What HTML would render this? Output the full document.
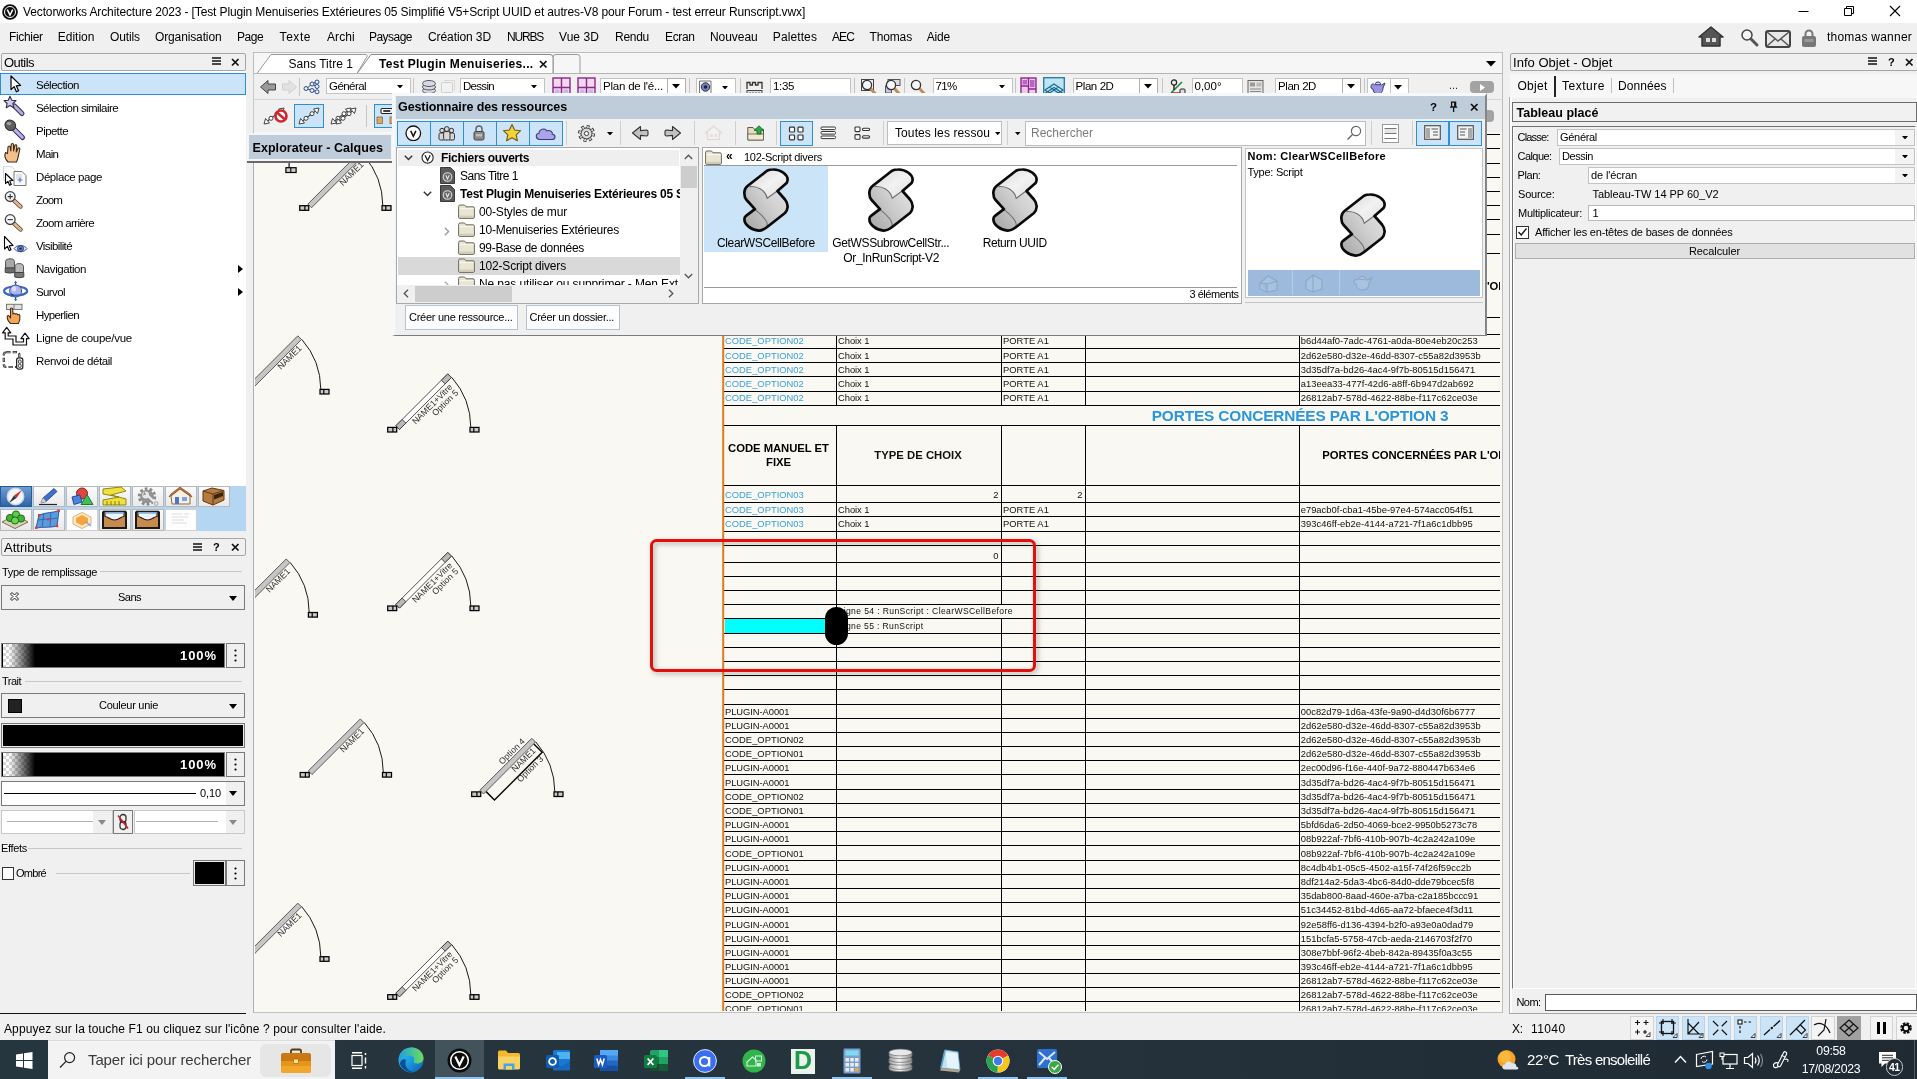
<!DOCTYPE html>
<html lang="fr"><head><meta charset="utf-8"><title>Vectorworks Architecture 2023</title>
<style>
html,body{margin:0;padding:0;background:#f0f0f0;}
body{width:1917px;height:1079px;overflow:hidden;font-family:"Liberation Sans",sans-serif;color:#000;}
#root{position:relative;width:1917px;height:1079px;overflow:hidden;background:#f0f0f0;will-change:transform;}
#root div,#root svg{position:absolute;box-sizing:border-box;}
#root .t{white-space:nowrap;}
#root span{white-space:nowrap;}

</style></head>
<body>
<div id="root">
<!-- p_frame -->
<div style="left:0px;top:0px;width:1917px;height:23px;background:#fff;"></div>
<svg style="left:2px;top:3.7px;" width="16" height="16" viewBox="0 0 16 16"><circle cx="8" cy="8" r="7.8" fill="#0c0c0c"/><circle cx="8" cy="8" r="5.5" fill="none" stroke="#fff" stroke-width="1"/><path d="M5.3 5.6 L8 11 L10.7 5.6" fill="none" stroke="#fff" stroke-width="1.5"/></svg>
<div class="t" style="left:23px;top:0px;height:24px;line-height:24px;font-size:12px;letter-spacing:-0.129px;">Vectorworks Architecture 2023 - [Test Plugin Menuiseries Extérieures 05 Simplifié V5+Script UUID et autres-V8 pour Forum - test erreur Runscript.vwx]</div>
<svg style="left:1790px;top:0px;" width="127" height="23" viewBox="0 0 127 23"><path d="M8.5 11.5h10" stroke="#000" stroke-width="1" fill="none"/><path d="M54.5 8.5h7v7h-7z M56.5 8.5v-2h7v7h-2" stroke="#000" stroke-width="1" fill="none"/><path d="M100 6l10 10M110 6l-10 10" stroke="#000" stroke-width="1.1" fill="none"/></svg>
<div style="left:0px;top:23px;width:1917px;height:29px;background:#f0f0f0;"></div>
<div class="t" style="left:9px;top:24px;height:26px;line-height:26px;font-size:12px;letter-spacing:-0.329px;">Fichier</div>
<div class="t" style="left:57.7px;top:24px;height:26px;line-height:26px;font-size:12px;letter-spacing:0.016px;">Edition</div>
<div class="t" style="left:110px;top:24px;height:26px;line-height:26px;font-size:12px;letter-spacing:-0.112px;">Outils</div>
<div class="t" style="left:155px;top:24px;height:26px;line-height:26px;font-size:12px;letter-spacing:-0.128px;">Organisation</div>
<div class="t" style="left:237px;top:24px;height:26px;line-height:26px;font-size:12px;letter-spacing:-0.431px;">Page</div>
<div class="t" style="left:279.6px;top:24px;height:26px;line-height:26px;font-size:12px;letter-spacing:0.544px;">Texte</div>
<div class="t" style="left:327px;top:24px;height:26px;line-height:26px;font-size:12px;letter-spacing:0.072px;">Archi</div>
<div class="t" style="left:369px;top:24px;height:26px;line-height:26px;font-size:12px;letter-spacing:-0.528px;">Paysage</div>
<div class="t" style="left:428px;top:24px;height:26px;line-height:26px;font-size:12px;letter-spacing:-0.093px;">Création 3D</div>
<div class="t" style="left:507px;top:24px;height:26px;line-height:26px;font-size:12px;letter-spacing:-1.202px;">NURBS</div>
<div class="t" style="left:559px;top:24px;height:26px;line-height:26px;font-size:12px;letter-spacing:0.070px;">Vue 3D</div>
<div class="t" style="left:615px;top:24px;height:26px;line-height:26px;font-size:12px;letter-spacing:-0.272px;">Rendu</div>
<div class="t" style="left:665px;top:24px;height:26px;line-height:26px;font-size:12px;letter-spacing:-0.329px;">Ecran</div>
<div class="t" style="left:710px;top:24px;height:26px;line-height:26px;font-size:12px;letter-spacing:-0.047px;">Nouveau</div>
<div class="t" style="left:772.8px;top:24px;height:26px;line-height:26px;font-size:12px;letter-spacing:0.105px;">Palettes</div>
<div class="t" style="left:832px;top:24px;height:26px;line-height:26px;font-size:12px;letter-spacing:-0.892px;">AEC</div>
<div class="t" style="left:869.5px;top:24px;height:26px;line-height:26px;font-size:12px;letter-spacing:-0.141px;">Thomas</div>
<div class="t" style="left:926.7px;top:24px;height:26px;line-height:26px;font-size:12px;letter-spacing:-0.179px;">Aide</div>
<svg style="left:1697px;top:25px;" width="28" height="24" viewBox="0 0 28 24"><path d="M2 12 L14 2 L26 12 L23 12 L23 21 L5 21 L5 12 Z" fill="#555" stroke="#333" stroke-width="1.5" stroke-linejoin="round"/><rect x="9" y="13" width="4" height="4" fill="#ddd"/><rect x="15" y="13" width="4" height="4" fill="#ddd"/></svg>
<svg style="left:1740px;top:28px;" width="20" height="20" viewBox="0 0 20 20"><circle cx="7" cy="7" r="5" fill="#f4f4f4" stroke="#444" stroke-width="1.5"/><path d="M11 11 L17 17" stroke="#555" stroke-width="3" stroke-linecap="round"/></svg>
<svg style="left:1765px;top:30px;" width="26" height="18" viewBox="0 0 26 18"><rect x="1" y="1" width="24" height="16" rx="2" fill="#e8e8e8" stroke="#444" stroke-width="2"/><path d="M2 2 L13 11 L24 2 M2 16 L10 9 M24 16 L16 9" fill="none" stroke="#555" stroke-width="1.5"/></svg>
<svg style="left:1801px;top:28px;" width="16" height="20" viewBox="0 0 16 20"><path d="M4.5 9 V6 a3.5 3.5 0 0 1 7 0 V9" fill="none" stroke="#777" stroke-width="2"/><rect x="1" y="8" width="14" height="11" rx="2" fill="#777"/><rect x="3.5" y="11" width="9" height="3" fill="#999"/></svg>
<div class="t" style="left:1827px;top:24px;height:26px;line-height:26px;font-size:12px;letter-spacing:0.228px;">thomas wanner</div>

<!-- p_left -->
<div style="left:1px;top:52.5px;width:245px;height:18px;background:#f0f0f0;border:1px solid #a5a5a5;border-radius:2px;"></div>
<div class="t" style="left:4px;top:52.8px;height:19px;line-height:19px;font-size:13px;letter-spacing:-0.538px;">Outils</div>
<svg style="left:212px;top:57px;" width="10" height="9" viewBox="0 0 10 9"><path d="M0 1h9M0 4h9M0 7h9" stroke="#111" stroke-width="1.4"/></svg>
<svg style="left:231px;top:57.5px;" width="9" height="9" viewBox="0 0 9 9"><path d="M1 1l6.5 6.5M7.5 1L1 7.5" stroke="#111" stroke-width="1.7"/></svg>
<div style="left:0px;top:71px;width:246px;height:415px;background:#fff;"></div>
<div style="left:0px;top:73px;width:245.5px;height:21.5px;background:#cce4f7;border:1px solid #2f8fd6;"></div>
<svg style="left:0px;top:72.3px;" width="30" height="24" viewBox="0 0 30 24"><path d="M11 4 V17.6 L14.1 14.6 L16.4 19.8 L18.6 18.8 L16.3 13.8 L20.6 13.4 Z" fill="#fff" stroke="#000" stroke-width="1.2" stroke-linejoin="round"/></svg>
<div class="t" style="left:36px;top:75.0px;height:20px;line-height:20px;font-size:11.5px;letter-spacing:-0.478px;">Sélection</div>
<svg style="left:0px;top:95.3px;" width="30" height="24" viewBox="0 0 30 24"><path d="M14.5 11 L22 18.5" stroke="#3a3a4a" stroke-width="5" stroke-linecap="round"/><path d="M14.5 11 L22 18.5" stroke="#b4aeea" stroke-width="2.8" stroke-linecap="round"/><path d="M10 1.2 L11.8 5.2 L16 5.6 L12.9 8.5 L13.8 12.8 L10 10.6 L6.2 12.8 L7.1 8.5 L4 5.6 L8.2 5.2 Z" fill="#cfc8fa" stroke="#2e2e3e" stroke-width="1.1" stroke-linejoin="round"/></svg>
<div class="t" style="left:36px;top:98.0px;height:20px;line-height:20px;font-size:11.5px;letter-spacing:-0.562px;">Sélection similaire</div>
<svg style="left:0px;top:118.3px;" width="30" height="24" viewBox="0 0 30 24"><path d="M12.5 9.5 L22.5 19.5" stroke="#3a3a55" stroke-width="5.2" stroke-linecap="round"/><path d="M12.5 9.5 L22.3 19.3" stroke="#b9b2f0" stroke-width="3" stroke-linecap="round"/><ellipse cx="10.3" cy="7.3" rx="5.6" ry="5" transform="rotate(40 10.3 7.3)" fill="#5e5e5e" stroke="#2e2e2e" stroke-width="1"/><ellipse cx="9" cy="5.6" rx="2.4" ry="1.6" fill="#a0a0a0"/></svg>
<div class="t" style="left:36px;top:121.0px;height:20px;line-height:20px;font-size:11.5px;letter-spacing:-0.543px;">Pipette</div>
<svg style="left:0px;top:141.3px;" width="30" height="24" viewBox="0 0 30 24"><path d="M8 21 C5 18 4 15 5.5 11.5 L7.5 12.5 L8 6 C8.2 4.6 10 4.6 10.2 6 L10.8 10 L11.2 3.6 C11.4 2.2 13.4 2.2 13.5 3.6 L13.6 10 L14.8 4.6 C15.2 3.2 17 3.6 16.8 5 L16.2 11 L18 7.4 C18.7 6.2 20.3 7 19.8 8.3 C18.6 12 18.5 17.5 16.5 21 Z" fill="#f3c08c" stroke="#3a2a1a" stroke-width="1.1" stroke-linejoin="round"/></svg>
<div class="t" style="left:36px;top:144.0px;height:20px;line-height:20px;font-size:11.5px;letter-spacing:-0.656px;">Main</div>
<svg style="left:0px;top:164.3px;" width="30" height="24" viewBox="0 0 30 24"><path d="M3.5 2.5 h8 l4 4 V16 H3.5 Z" fill="#fafafa" stroke="#d8d8d8" stroke-width="1"/><path d="M14 7.5 h8 l4 4 V21.5 H14 Z" fill="#fafafa" stroke="#777" stroke-width="1"/><rect x="16" y="10" width="6" height="5" fill="#e4e4e4"/><path d="M20 13.5v5M17.5 16h5" stroke="#4a6cc9" stroke-width="1"/><path d="M5.5 9.5 V19.6 L7.9 17.4 L9.6 21.2 L11.3 20.4 L9.6 16.8 L12.8 16.5 Z" fill="#fff" stroke="#000" stroke-width="1.1" stroke-linejoin="round"/></svg>
<div class="t" style="left:36px;top:167.0px;height:20px;line-height:20px;font-size:11.5px;letter-spacing:-0.414px;">Déplace page</div>
<svg style="left:0px;top:187.3px;" width="30" height="24" viewBox="0 0 30 24"><path d="M14.5 14 L20.5 19.5" stroke="#5a4632" stroke-width="4.4" stroke-linecap="round"/><path d="M14.5 14 L20.5 19.5" stroke="#e2b78c" stroke-width="2.6" stroke-linecap="round"/><circle cx="10.2" cy="9.6" r="4.9" fill="#f4f7fb" stroke="#444" stroke-width="1.3"/><path d="M7.6 9.6h5.2M10.2 7v5.2" stroke="#333" stroke-width="1.1"/></svg>
<div class="t" style="left:36px;top:190.0px;height:20px;line-height:20px;font-size:11.5px;letter-spacing:-0.848px;">Zoom</div>
<svg style="left:0px;top:210.3px;" width="30" height="24" viewBox="0 0 30 24"><path d="M14.5 14 L20.5 19.5" stroke="#5a4632" stroke-width="4.4" stroke-linecap="round"/><path d="M14.5 14 L20.5 19.5" stroke="#e2b78c" stroke-width="2.6" stroke-linecap="round"/><circle cx="10.2" cy="9.6" r="4.9" fill="#f4f7fb" stroke="#444" stroke-width="1.3"/><path d="M7.6 9.6h5.2" stroke="#333" stroke-width="1.1"/></svg>
<div class="t" style="left:36px;top:213.0px;height:20px;line-height:20px;font-size:11.5px;letter-spacing:-0.651px;">Zoom arrière</div>
<svg style="left:0px;top:233.3px;" width="30" height="24" viewBox="0 0 30 24"><path d="M4.5 3.5 V16 L7.4 13.3 L9.2 17.6 L11 16.8 L9.2 12.7 L13 12.4 Z" fill="#fff" stroke="#000" stroke-width="1.1" stroke-linejoin="round"/><path d="M14 15.6 C17 11.4 24 11.4 27 15.6 C24 19.8 17 19.8 14 15.6 Z" fill="#dfe8fa" stroke="#4a5a8a" stroke-width="1"/><circle cx="20.5" cy="15.6" r="3" fill="#6a86d6" stroke="#2a3a6a"/><circle cx="20.5" cy="15.6" r="1.2" fill="#1a2244"/></svg>
<div class="t" style="left:36px;top:236.0px;height:20px;line-height:20px;font-size:11.5px;letter-spacing:-0.597px;">Visibilité</div>
<svg style="left:0px;top:256.3px;" width="30" height="24" viewBox="0 0 30 24"><path d="M5.5 5.5 C5.5 1.8 14.5 1.8 14.5 5.5 V12 H5.5 Z" fill="#a8a8a8" stroke="#555" stroke-width="1"/><path d="M5.2 12 H14.8 V16.4 Q10 17.8 5.2 16.4 Z" fill="#6c6c6c" stroke="#444" stroke-width="1"/><path d="M15 10.3 C15 6.6 23.5 6.6 23.5 10.3 V16.5 H15 Z" fill="#b8b8b8" stroke="#555" stroke-width="1"/><path d="M14.7 16.5 H23.8 V21 Q19.2 22.4 14.7 21 Z" fill="#787878" stroke="#444" stroke-width="1"/></svg>
<div class="t" style="left:36px;top:259.0px;height:20px;line-height:20px;font-size:11.5px;letter-spacing:-0.434px;">Navigation</div>
<svg style="left:0px;top:279.3px;" width="30" height="24" viewBox="0 0 30 24"><path d="M15.6 3 V21" stroke="#2c4f94" stroke-width="1.2"/><path d="M14 4 L15.6 1.5 L17.2 4 Z M14 20 L15.6 22.5 L17.2 20 Z" fill="#3b6fc4"/><ellipse cx="15.6" cy="12" rx="11.6" ry="4.6" fill="none" stroke="#3a66c4" stroke-width="2"/><circle cx="15.6" cy="12" r="6" fill="#aeb4f2" stroke="#3a4f9a" stroke-width="1"/><circle cx="14" cy="10" r="2.4" fill="#d9dcfb"/><path d="M4.2 13.2 C8 17.6 23 17.6 27 13.2" fill="none" stroke="#3a66c4" stroke-width="2"/><path d="M11 14.5 l2.5 1.8 l-2.8 1.2" fill="none" stroke="#1f3f8a" stroke-width="1"/></svg>
<div class="t" style="left:36px;top:282.0px;height:20px;line-height:20px;font-size:11.5px;letter-spacing:-0.599px;">Survol</div>
<svg style="left:0px;top:302.3px;" width="30" height="24" viewBox="0 0 30 24"><rect x="6.5" y="2.3" width="15.5" height="5.2" fill="#e2e2e2" stroke="#777"/><path d="M14 2.3v5.2" stroke="#777"/><path d="M10.5 21.5 C8 19 7 17 7.2 14.5 C7.3 13.4 8.6 13.2 9.2 14.2 L10.6 16 L10.4 7.2 C10.4 5.6 12.6 5.6 12.7 7.2 L12.9 12 C13.3 11 15 11 15.2 12.3 C15.8 11.4 17.4 11.6 17.6 12.9 C18.3 12.2 19.8 12.5 19.9 13.8 C20.2 16.5 19.8 19 18.4 21.5 Z" fill="#f2a75a" stroke="#4a2a10" stroke-width="1.1" stroke-linejoin="round"/></svg>
<div class="t" style="left:36px;top:305.0px;height:20px;line-height:20px;font-size:11.5px;letter-spacing:-0.619px;">Hyperlien</div>
<svg style="left:0px;top:325.3px;" width="30" height="24" viewBox="0 0 30 24"><path d="M6.7 6 V12.5 H14.5 V18.5 H25 V12" fill="none" stroke="#111" stroke-width="4.2" stroke-linejoin="miter"/><path d="M2.6 7.8 L6.7 2.4 L10.8 7.8 Z M20.9 13.6 L25 8.2 L29.1 13.6 Z" fill="#fff" stroke="#111" stroke-width="1.2" stroke-linejoin="round"/><path d="M6.7 6.5 V12.5 H14.5 V18.5 H25 V12.5" fill="none" stroke="#fff" stroke-width="1.8"/></svg>
<div class="t" style="left:36px;top:328.0px;height:20px;line-height:20px;font-size:11.5px;letter-spacing:-0.243px;">Ligne de coupe/vue</div>
<svg style="left:0px;top:348.3px;" width="30" height="24" viewBox="0 0 30 24"><rect x="3.8" y="4.2" width="15.5" height="14.8" rx="2.5" fill="none" stroke="#222" stroke-width="2.2" stroke-dasharray="4.2 2.2"/><rect x="3.8" y="4.2" width="15.5" height="14.8" rx="2.5" fill="none" stroke="#fff" stroke-width=".7" stroke-dasharray="3 3.4" stroke-dashoffset="-.6"/><rect x="16.6" y="9.8" width="6.2" height="11.4" rx="2.2" fill="#fff" stroke="#222" stroke-width="1.2"/><rect x="18.3" y="12" width="2.8" height="3.2" rx="1" fill="none" stroke="#222" stroke-width=".9"/><rect x="18.3" y="16.2" width="2.8" height="3.2" rx="1" fill="none" stroke="#222" stroke-width=".9"/></svg>
<div class="t" style="left:36px;top:351.0px;height:20px;line-height:20px;font-size:11.5px;letter-spacing:-0.404px;">Renvoi de détail</div>
<svg style="left:238px;top:264.5px;" width="5" height="8" viewBox="0 0 5 8"><path d="M0 0L5 4L0 8z"/></svg>
<svg style="left:238px;top:287.5px;" width="5" height="8" viewBox="0 0 5 8"><path d="M0 0L5 4L0 8z"/></svg>
<div style="left:0px;top:485.8px;width:246px;height:45.4px;background:#b4d6f3;"></div>
<div style="left:0px;top:486.0px;width:31.5px;height:21.4px;background:linear-gradient(#6d9ed6,#2f64a6);border:1px solid #2a5a96;"></div>
<svg style="left:0px;top:486.0px;" width="31" height="21" viewBox="0 0 31 21"><circle cx="15.5" cy="10.5" r="8.2" fill="#f4f7fb" stroke="#d0d8e4" stroke-width="1.5"/><path d="M22 4 L14 9.5 L16.5 12 Z" fill="#d2302c"/><path d="M9 17 L14 9.5 L16.5 12 Z" fill="#333"/></svg>
<div style="left:33px;top:486.0px;width:31.5px;height:21.4px;background:linear-gradient(#fbfbfb,#e9e9e9);border:1px solid #b8b8b8;"></div>
<svg style="left:33px;top:486.0px;" width="31" height="21" viewBox="0 0 31 21"><path d="M8 17 L10 12 L21 2.5 L24 5.5 L13 15.5 Z" fill="#3d6fd1" stroke="#1f3f8a" stroke-width=".8"/><path d="M8 17 L10 12 L13 15.5 Z" fill="#f1d2a8"/><path d="M6 18.5 H24" stroke="#223" stroke-width="1.2"/></svg>
<div style="left:66px;top:486.0px;width:31.5px;height:21.4px;background:linear-gradient(#fbfbfb,#e9e9e9);border:1px solid #b8b8b8;"></div>
<svg style="left:66px;top:486.0px;" width="31" height="21" viewBox="0 0 31 21"><circle cx="16" cy="7.5" r="5.5" fill="#e0453e" stroke="#8c1f1b"/><path d="M6 11 L14 9 L16 16 L8 18.5 Z" fill="#4a86e0" stroke="#1f4a9a"/><path d="M21 8.5 L27 18.5 H15 Z" fill="#3fbf5a" stroke="#1f7a33"/></svg>
<div style="left:99px;top:486.0px;width:31.5px;height:21.4px;background:linear-gradient(#fbfbfb,#e9e9e9);border:1px solid #b8b8b8;"></div>
<svg style="left:99px;top:486.0px;" width="31" height="21" viewBox="0 0 31 21"><path d="M4 3 L22 1 L27 5 L12 9 L27 13 L27 19 L4 19 L4 14 L20 11 L4 8 Z" fill="#efe23a" stroke="#8f8516" stroke-width="1"/><path d="M8 15v4M12 15v4M16 15v4M20 15v4" stroke="#6b6410" stroke-width=".8"/></svg>
<div style="left:132px;top:486.0px;width:31.5px;height:21.4px;background:linear-gradient(#fbfbfb,#e9e9e9);border:1px solid #b8b8b8;"></div>
<svg style="left:132px;top:486.0px;" width="31" height="21" viewBox="0 0 31 21"><circle cx="15" cy="10.5" r="7.6" fill="none" stroke="#8a8a8a" stroke-width="3.2" stroke-dasharray="2.7 2.07"/><circle cx="15" cy="10.5" r="6.8" fill="#939393"/><circle cx="13.6" cy="9" r="3.4" fill="#e9e9e9"/><path d="M12.2 5.4 L14.2 8.6 L11 9.6 Z" fill="#939393"/><path d="M15 10.6 L22.4 17.8 L24 16.2 L16.8 9 Z" fill="#e9e9e9"/><circle cx="24.2" cy="17.6" r="1.8" fill="none" stroke="#b0b0b0" stroke-width="1.2"/></svg>
<div style="left:165px;top:486.0px;width:31.5px;height:21.4px;background:linear-gradient(#fbfbfb,#e9e9e9);border:1px solid #b8b8b8;"></div>
<svg style="left:165px;top:486.0px;" width="31" height="21" viewBox="0 0 31 21"><path d="M6 10 L15 3 L25 10 L25 18 L7 18 Z" fill="#f7efe2" stroke="#8a6a45" stroke-width="1"/><path d="M4 11 L15 2.5 L27 11 L25 8 L15 1 L6 8 Z" fill="#d98a4a" stroke="#8a4a1c" stroke-width=".8"/><rect x="10" y="11" width="4" height="7" fill="#4a76c4"/><rect x="17" y="11" width="5" height="4" fill="#7aa5e6"/></svg>
<div style="left:198px;top:486.0px;width:31.5px;height:21.4px;background:linear-gradient(#fbfbfb,#e9e9e9);border:1px solid #b8b8b8;"></div>
<svg style="left:198px;top:486.0px;" width="31" height="21" viewBox="0 0 31 21"><path d="M5 5 L14 2 L26 4.5 L26 14 L15 19 L5 15 Z" fill="#b77a3e" stroke="#5e3a17" stroke-width="1"/><path d="M5 5 L15 8 L26 4.5 M15 8 V19" stroke="#5e3a17" fill="none"/><path d="M16 9 L25 6 V10 L16 13.5 Z" fill="#3a2410"/></svg>
<div style="left:0px;top:509.2px;width:31.5px;height:21.4px;background:linear-gradient(#fbfbfb,#e9e9e9);border:1px solid #b8b8b8;"></div>
<svg style="left:0px;top:509.2px;" width="31" height="21" viewBox="0 0 31 21"><path d="M2 13 L15 6 L28 13 L15 19.5 Z" fill="#d8d2b8" stroke="#77724f"/><circle cx="10" cy="9" r="3.6" fill="#45b336" stroke="#1f6a17"/><circle cx="16" cy="5.5" r="3.6" fill="#5fca4a" stroke="#1f6a17"/><circle cx="21" cy="9.5" r="3.6" fill="#45b336" stroke="#1f6a17"/><circle cx="15" cy="11.5" r="3.6" fill="#6ad656" stroke="#1f6a17"/></svg>
<div style="left:33px;top:509.2px;width:31.5px;height:21.4px;background:linear-gradient(#fbfbfb,#e9e9e9);border:1px solid #b8b8b8;"></div>
<svg style="left:33px;top:509.2px;" width="31" height="21" viewBox="0 0 31 21"><path d="M6 6 C14 3 20 4 26 1.5 L24 17 C17 19 11 17.5 3 19 Z" fill="#5a9ae0" stroke="#2a5aa0"/><path d="M11 4.5 L9 18 M18 3.6 L17 18 M5 11 C12 10 19 10 25 9" stroke="#2a5aa0" fill="none" stroke-width=".8"/><g fill="#e03a2e"><rect x="5" y="5" width="2.4" height="2.4"/><rect x="24.5" y=".5" width="2.4" height="2.4"/><rect x="2" y="17.6" width="2.4" height="2.4"/><rect x="22.8" y="15.8" width="2.4" height="2.4"/><rect x="14" y="9" width="2.4" height="2.4"/></g></svg>
<div style="left:66px;top:509.2px;width:31.5px;height:21.4px;background:#fff;border:1px solid #d0d0d0;"></div>
<svg style="left:66px;top:509.2px;" width="31" height="21" viewBox="0 0 31 21"><path d="M7 8 L16 3.5 L25 8 V15 L16 19.5 L7 15 Z" fill="#fbe9cf" stroke="#e0b070"/><path d="M10 9 L16 6 L22 9 V13.5 L16 16.5 L10 13.5 Z" fill="#f5a63a"/><path d="M20 13 l5 4" stroke="#7aa5e6" stroke-width="1.5"/></svg>
<div style="left:99px;top:509.2px;width:31.5px;height:21.4px;background:linear-gradient(#fbfbfb,#e9e9e9);border:1px solid #b8b8b8;"></div>
<svg style="left:99px;top:509.2px;" width="31" height="21" viewBox="0 0 31 21"><path d="M4 2.5 V19 H27 V2.5" fill="#c98a4e" stroke="#1a1a1a" stroke-width="2"/><path d="M6 2.5 H25 V7.5 C22 7.5 20 11 15.5 11 C11 11 9 7.5 6 7.5 Z" fill="#eef3f8" stroke="#1a1a1a" stroke-width="1.1"/><path d="M4 2.5 H27" stroke="#1a1a1a" stroke-width="1.6"/><path d="M6 4 H25" stroke="#7aa8d8" stroke-width="1.4"/></svg>
<div style="left:132px;top:509.2px;width:31.5px;height:21.4px;background:linear-gradient(#fbfbfb,#e9e9e9);border:1px solid #b8b8b8;"></div>
<svg style="left:132px;top:509.2px;" width="31" height="21" viewBox="0 0 31 21"><path d="M4 2.5 V19 H27 V2.5" fill="#c98a4e" stroke="#1a1a1a" stroke-width="2"/><path d="M6 2.5 H25 V7.5 C22 7.5 20 11 15.5 11 C11 11 9 7.5 6 7.5 Z" fill="#eef3f8" stroke="#1a1a1a" stroke-width="1.1"/><path d="M4 2.5 H27" stroke="#1a1a1a" stroke-width="1.6"/><path d="M6 4 H25" stroke="#7aa8d8" stroke-width="1.4"/></svg>
<div style="left:165px;top:509.2px;width:31.5px;height:21.4px;background:#fff;border:1px solid #d0d0d0;"></div>
<svg style="left:165px;top:509.2px;" width="31" height="21" viewBox="0 0 31 21"><rect x="5" y="2" width="21" height="17" fill="#fdfdfd"/><path d="M7 5h10M7 8h16M7 11h12M7 14h15M19 5h5" stroke="#d4d4d4" stroke-width=".8"/></svg>
<div style="left:1px;top:537.5px;width:245px;height:18.5px;background:#f0f0f0;border:1px solid #a5a5a5;border-radius:2px;"></div>
<div class="t" style="left:4px;top:537.6px;height:19px;line-height:19px;font-size:13px;letter-spacing:0.035px;">Attributs</div>
<svg style="left:193px;top:542.5px;" width="10" height="9" viewBox="0 0 10 9"><path d="M0 1h9M0 4h9M0 7h9" stroke="#111" stroke-width="1.4"/></svg>
<div class="t" style="left:213px;top:541px;height:12px;line-height:12px;font-size:11px;font-weight:bold;">?</div>
<svg style="left:231px;top:543px;" width="9" height="9" viewBox="0 0 9 9"><path d="M1 1l6.5 6.5M7.5 1L1 7.5" stroke="#111" stroke-width="1.7"/></svg>
<div class="t" style="left:2px;top:562px;height:20px;line-height:20px;font-size:11px;letter-spacing:-0.342px;">Type de remplissage</div>
<div style="left:100px;top:571px;width:142px;height:1px;background:#c8c8c8;"></div>
<div style="left:1px;top:584.5px;width:243.7px;height:25.5px;background:#f0f0f0;border:1px solid #7a7a7a;"></div>
<svg style="left:9px;top:591px;" width="11" height="11" viewBox="0 0 11 11"><path d="M1.5 3 L3 1.5 L5.5 4 L8 1.5 L9.5 3 L7 5.5 L9.5 8 L8 9.5 L5.5 7 L3 9.5 L1.5 8 L4 5.5 Z" fill="#fff" stroke="#222" stroke-width="1"/></svg>
<div class="t" style="left:118px;top:587px;height:21px;line-height:21px;font-size:11px;letter-spacing:-0.518px;">Sans</div>
<svg style="left:229px;top:596px;" width="8" height="5" viewBox="0 0 8 5"><path d="M0 0h8L4.0 5z" fill="#000"/></svg>
<div style="left:1px;top:642.5px;width:223.5px;height:25px;border:1px solid #7a7a7a;background:#000;"></div>
<div style="left:2.5px;top:643.5px;width:32px;height:23px;background-color:#fff;background-image:linear-gradient(45deg,#d4d4d4 25%,transparent 25%,transparent 75%,#d4d4d4 75%),linear-gradient(45deg,#d4d4d4 25%,transparent 25%,transparent 75%,#d4d4d4 75%);background-size:6px 6px;background-position:0 0,3px 3px;"></div>
<div style="left:2.5px;top:643.5px;width:32px;height:23px;background:linear-gradient(90deg,rgba(0,0,0,0) 20%,#000 100%);"></div>
<div class="t" style="left:180px;top:644.5px;height:22px;line-height:22px;font-size:13px;letter-spacing:0.938px;font-weight:bold;color:#fff;">100%</div>
<div style="left:225.5px;top:642.5px;width:19px;height:25px;background:#f0f0f0;border:1px solid #7a7a7a;"></div>
<svg style="left:233.5px;top:648.5px;" width="3" height="13" viewBox="0 0 3 13"><circle cx="1.5" cy="1.5" r="1.1"/><circle cx="1.5" cy="6.5" r="1.1"/><circle cx="1.5" cy="11.5" r="1.1"/></svg>
<div class="t" style="left:2px;top:671px;height:20px;line-height:20px;font-size:11px;letter-spacing:-0.518px;">Trait</div>
<div style="left:25px;top:680.5px;width:217px;height:1px;background:#c8c8c8;"></div>
<div style="left:1px;top:693px;width:243.7px;height:25px;background:#f0f0f0;border:1px solid #7a7a7a;"></div>
<div style="left:8px;top:699px;width:14px;height:14px;background:#222;border:1px solid #000;"></div>
<div class="t" style="left:99px;top:695px;height:21px;line-height:21px;font-size:11px;letter-spacing:-0.281px;">Couleur unie</div>
<svg style="left:229px;top:704px;" width="8" height="5" viewBox="0 0 8 5"><path d="M0 0h8L4.0 5z" fill="#000"/></svg>
<div style="left:1px;top:723px;width:243.7px;height:24.5px;background:#ececec;border:1px solid #7a7a7a;"></div>
<div style="left:3px;top:725px;width:239.7px;height:20.5px;background:#000;"></div>
<div style="left:1px;top:751.5px;width:223.5px;height:25px;border:1px solid #7a7a7a;background:#000;"></div>
<div style="left:2.5px;top:752.5px;width:32px;height:23px;background-color:#fff;background-image:linear-gradient(45deg,#d4d4d4 25%,transparent 25%,transparent 75%,#d4d4d4 75%),linear-gradient(45deg,#d4d4d4 25%,transparent 25%,transparent 75%,#d4d4d4 75%);background-size:6px 6px;background-position:0 0,3px 3px;"></div>
<div style="left:2.5px;top:752.5px;width:32px;height:23px;background:linear-gradient(90deg,rgba(0,0,0,0) 20%,#000 100%);"></div>
<div class="t" style="left:180px;top:753.5px;height:22px;line-height:22px;font-size:13px;letter-spacing:0.938px;font-weight:bold;color:#fff;">100%</div>
<div style="left:225.5px;top:751.5px;width:19px;height:25px;background:#f0f0f0;border:1px solid #7a7a7a;"></div>
<svg style="left:233.5px;top:757.5px;" width="3" height="13" viewBox="0 0 3 13"><circle cx="1.5" cy="1.5" r="1.1"/><circle cx="1.5" cy="6.5" r="1.1"/><circle cx="1.5" cy="11.5" r="1.1"/></svg>
<div style="left:1px;top:781px;width:243.7px;height:24.5px;background:#fff;border:1px solid #7a7a7a;"></div>
<div style="left:4px;top:792.5px;width:192px;height:1px;background:#000;"></div>
<div class="t" style="left:200px;top:783px;height:21px;line-height:21px;font-size:11px;letter-spacing:-0.102px;">0,10</div>
<div style="left:226px;top:782px;width:18px;height:22.5px;background:#f0f0f0;"></div>
<svg style="left:229px;top:791px;" width="8" height="5" viewBox="0 0 8 5"><path d="M0 0h8L4.0 5z" fill="#000"/></svg>
<div style="left:1px;top:809.5px;width:111.5px;height:24.5px;background:#fff;border:1px solid #c8c8c8;"></div>
<div style="left:7px;top:821px;width:86px;height:1px;background:#b0b0b0;"></div>
<div style="left:93px;top:810.5px;width:18.5px;height:22.5px;background:#f0f0f0;"></div>
<svg style="left:97.5px;top:820px;" width="8" height="5" viewBox="0 0 8 5"><path d="M0 0h8L4.0 5z" fill="#8a8a8a"/></svg>
<div style="left:112.5px;top:809.5px;width:20.5px;height:24.5px;background:#f0f0f0;border:1px solid #7a7a7a;"></div>
<svg style="left:116px;top:812px;" width="14" height="20" viewBox="0 0 14 20"><rect x="4" y="2.5" width="6" height="8" rx="3" fill="none" stroke="#333" stroke-width="1.3"/><rect x="4" y="9.5" width="6" height="8" rx="3" fill="none" stroke="#333" stroke-width="1.3"/><path d="M2 3.5 L12 16.5" stroke="#c8202a" stroke-width="1.6"/></svg>
<div style="left:134px;top:809.5px;width:110.5px;height:24.5px;background:#fff;border:1px solid #c8c8c8;"></div>
<div style="left:136px;top:821px;width:82px;height:1px;background:#b0b0b0;"></div>
<div style="left:226px;top:810.5px;width:18px;height:22.5px;background:#f0f0f0;"></div>
<svg style="left:229px;top:820px;" width="8" height="5" viewBox="0 0 8 5"><path d="M0 0h8L4.0 5z" fill="#8a8a8a"/></svg>
<div class="t" style="left:1px;top:837.5px;height:20px;line-height:20px;font-size:11px;letter-spacing:-0.320px;">Effets</div>
<div style="left:28px;top:847.5px;width:214px;height:1px;background:#c8c8c8;"></div>
<div style="left:1.5px;top:867px;width:12.5px;height:12.5px;background:#fff;border:1px solid #333;"></div>
<div class="t" style="left:16px;top:863px;height:20px;line-height:20px;font-size:11px;letter-spacing:-0.723px;">Ombré</div>
<div style="left:56px;top:873px;width:134px;height:1px;background:#c8c8c8;"></div>
<div style="left:193px;top:860px;width:32.5px;height:25.5px;background:#ececec;border:1px solid #7a7a7a;"></div>
<div style="left:195px;top:862px;width:28.5px;height:21.5px;background:#000;"></div>
<div style="left:225.5px;top:860px;width:19px;height:25.5px;background:#f0f0f0;border:1px solid #7a7a7a;"></div>
<svg style="left:233.5px;top:866.5px;" width="3" height="13" viewBox="0 0 3 13"><circle cx="1.5" cy="1.5" r="1.1"/><circle cx="1.5" cy="6.5" r="1.1"/><circle cx="1.5" cy="11.5" r="1.1"/></svg>
<div style="left:0px;top:1012.5px;width:246px;height:1.5px;background:#111;"></div>

<!-- p_doc -->
<div style="left:253px;top:52px;width:1249.5px;height:21.5px;background:#f6f6f6;border:1px solid #bdbdbd;border-bottom:none;"></div>
<svg style="left:253px;top:53px;" width="340" height="21" viewBox="0 0 340 21"><path d="M4 20.5 L18 1.5 H112 Q116 1.5 113 5 L104 20.5 Z" fill="#fff" stroke="#9a9a9a" stroke-width="1"/><path d="M300 20.5 V4 Q300 1.5 303 1.5 H324 Q327 1.5 327 4 V20.5" fill="#f6f6f6" stroke="#9a9a9a" stroke-width="1"/><path d="M104 20.6 L118 1.5 H297 Q300 1.5 300 4.5 V20.6 Z" fill="#fff" stroke="#8a8a8a" stroke-width="1"/><path d="M104.5 20.6 H299.5" stroke="#fff" stroke-width="1.4"/></svg>
<div class="t" style="left:288.5px;top:53.5px;height:20px;line-height:20px;font-size:12px;letter-spacing:0.039px;">Sans Titre 1</div>
<div class="t" style="left:379px;top:53.5px;height:20px;line-height:20px;font-size:12px;letter-spacing:0.309px;font-weight:bold;">Test Plugin Menuiseries...</div>
<svg style="left:538.5px;top:60px;" width="9" height="9" viewBox="0 0 9 9"><path d="M1 1l6.5 6.5M7.5 1L1 7.5" stroke="#111" stroke-width="1.7"/></svg>
<svg style="left:1486px;top:61px;" width="10" height="5.5" viewBox="0 0 10 5.5"><path d="M0 0h10L5.0 5.5z" fill="#000"/></svg>
<div style="left:253px;top:73px;width:1249.5px;height:26px;background:#f0f0f0;border-top:1px solid #b5b5b5;border-left:1px solid #c8c8c8;border-right:1px solid #bdbdbd;"></div>
<svg style="left:259px;top:78px;" width="40" height="18" viewBox="0 0 40 18"><path d="M1.5 9 L9 2.5 V6 H16.5 V12 H9 V15.5 Z" fill="#9a9a9a" stroke="#444" stroke-width="1"/><path d="M37.5 9 L30 2.5 V6 H23.5 V12 H30 V15.5 Z" fill="#e2e2e2" stroke="#d0d0d0" stroke-width="1"/></svg>
<div style="left:299px;top:78px;width:1px;height:18px;background:#c6c6c6;"></div>
<svg style="left:303px;top:79px;" width="17" height="16" viewBox="0 0 17 16"><path d="M3.5 9.5 L9 5 M3.5 9.5 L9 11.5 M9 5 L13.5 3 M9 5 L13.5 7.5 M9 11.5 L13.5 12.5" stroke="#444" stroke-width="1" fill="none"/><g fill="#e8f0ff" stroke="#2b4a8a" stroke-width="1"><circle cx="3" cy="9.5" r="2"/><circle cx="9" cy="5" r="2"/><circle cx="9" cy="11.5" r="2"/><circle cx="14" cy="3" r="2"/><circle cx="14" cy="7.5" r="2"/><circle cx="14" cy="12.8" r="2"/></g></svg>
<div style="left:326px;top:78.4px;width:85px;height:16px;background:#fff;border:1px solid #c3c3c3;"></div>
<div class="t" style="left:329px;top:76.80000000000001px;height:19px;line-height:19px;font-size:11.5px;letter-spacing:-0.558px;">Général</div>
<svg style="left:397px;top:84.9px;" width="6" height="3.5" viewBox="0 0 6 3.5"><path d="M0 0h6L3.0 3.5z" fill="#000"/></svg>
<div style="left:413px;top:78px;width:1px;height:18px;background:#c6c6c6;"></div>
<svg style="left:421px;top:79px;" width="16" height="16" viewBox="0 0 16 16"><g fill="#d8d8ea" stroke="#555" stroke-width="1"><ellipse cx="8" cy="11.5" rx="6.5" ry="3"/><ellipse cx="8" cy="8" rx="6.5" ry="3"/><ellipse cx="8" cy="4.5" rx="6.5" ry="3"/></g></svg>
<svg style="left:440px;top:79px;" width="16" height="16" viewBox="0 0 16 16"><rect x="1.5" y="3.5" width="11" height="10" rx="1" fill="#f2f2f2" stroke="#cfcfcf"/><path d="M4 1.5 H14.5 V11" fill="none" stroke="#d8d8d8"/></svg>
<div style="left:460px;top:78.4px;width:85px;height:16px;background:#fff;border:1px solid #c3c3c3;"></div>
<div class="t" style="left:463px;top:76.80000000000001px;height:19px;line-height:19px;font-size:11.5px;letter-spacing:-0.692px;">Dessin</div>
<svg style="left:531px;top:84.9px;" width="6" height="3.5" viewBox="0 0 6 3.5"><path d="M0 0h6L3.0 3.5z" fill="#000"/></svg>
<svg style="left:551.5px;top:77px;" width="19" height="20" viewBox="0 0 19 20"><rect x="1" y="1" width="17" height="18" fill="#f3d6f0" stroke="#8a2a86" stroke-width="1.4"/><path d="M9.5 1 V19 M1 10.5 H18" stroke="#8a2a86" stroke-width="1.4"/><rect x="3" y="12.5" width="4.5" height="5" fill="#c9b6e6"/><rect x="11.5" y="12.5" width="4.5" height="5" fill="#c9b6e6"/></svg>
<svg style="left:576.5px;top:77px;" width="19" height="20" viewBox="0 0 19 20"><rect x="1" y="1" width="17" height="18" fill="#f3d6f0" stroke="#8a2a86" stroke-width="1.4"/><path d="M9.5 1 V19 M1 10.5 H18" stroke="#8a2a86" stroke-width="1.4"/><rect x="3" y="12.5" width="4.5" height="5" fill="#c9b6e6"/><rect x="11.5" y="12.5" width="4.5" height="5" fill="#c9b6e6"/></svg>
<div style="left:600px;top:78.4px;width:86px;height:16px;background:#fff;border:1px solid #c3c3c3;"></div>
<div class="t" style="left:603px;top:76.80000000000001px;height:19px;line-height:19px;font-size:11.5px;letter-spacing:-0.209px;">Plan de l'é...</div>
<div style="left:667px;top:78.4px;width:19px;height:16px;background:#fff;border:1px solid #b0b0b0;"></div>
<svg style="left:672px;top:84.4px;" width="8" height="4.5" viewBox="0 0 8 4.5"><path d="M0 0h8L4.0 4.5z" fill="#000"/></svg>
<div style="left:688.5px;top:78px;width:1px;height:18px;background:#c6c6c6;"></div>
<div style="left:695.5px;top:78.4px;width:40.5px;height:16px;background:#fff;border:1px solid #c3c3c3;"></div>
<svg style="left:698px;top:79px;" width="18" height="16" viewBox="0 0 18 16"><path d="M1.5 2 H13 V15 H1.5 Z" fill="#f4f4f4" stroke="#777"/><circle cx="7.5" cy="8" r="4.2" fill="#6d86c9" stroke="#333"/><circle cx="7.5" cy="8" r="1.8" fill="#223"/></svg>
<svg style="left:722px;top:85.5px;" width="6" height="3.5" viewBox="0 0 6 3.5"><path d="M0 0h6L3.0 3.5z" fill="#000"/></svg>
<div style="left:739.5px;top:78px;width:1px;height:18px;background:#c6c6c6;"></div>
<svg style="left:746px;top:80px;" width="18" height="15" viewBox="0 0 18 15"><path d="M1 9 V2.5 H4 V5 H6.5 V2.5 H9.5 V5 H12 V2.5 H16 V9" fill="none" stroke="#333" stroke-width="1.3"/><rect x="1" y="10.5" width="15" height="4" fill="#ddd" stroke="#444" stroke-width="1"/><path d="M4 12v2M7 12v2M10 12v2M13 12v2" stroke="#444" stroke-width=".8"/></svg>
<div style="left:770px;top:78.4px;width:80.5px;height:16px;background:#fff;border:1px solid #c3c3c3;"></div>
<div class="t" style="left:773px;top:76.8px;height:19px;line-height:19px;font-size:11.5px;letter-spacing:-0.345px;">1:35</div>
<div style="left:853.7px;top:78px;width:1px;height:18px;background:#c6c6c6;"></div>
<svg style="left:860px;top:78px;" width="18" height="18" viewBox="0 0 18 18"><rect x="1.5" y="1.5" width="12" height="11" fill="none" stroke="#444"/><path d="M10 10 L15.5 16" stroke="#c28a55" stroke-width="3" stroke-linecap="round"/><circle cx="7" cy="7" r="4.6" fill="#f4f7fb" stroke="#333" stroke-width="1.3"/></svg>
<svg style="left:884px;top:78px;" width="18" height="18" viewBox="0 0 18 18"><rect x="4" y="1.5" width="12" height="6" fill="#ddd" stroke="#555"/><rect x="1.5" y="8" width="6" height="7" fill="#c9c4ea" stroke="#555"/><path d="M10 10 L15.5 16" stroke="#c28a55" stroke-width="3" stroke-linecap="round"/><circle cx="7" cy="7" r="4.6" fill="#f4f7fb" stroke="#333" stroke-width="1.3"/></svg>
<div style="left:903.7px;top:78px;width:1px;height:18px;background:#c6c6c6;"></div>
<svg style="left:909px;top:78px;" width="18" height="18" viewBox="0 0 18 18"><path d="M10 10 L15.5 16" stroke="#c28a55" stroke-width="3" stroke-linecap="round"/><circle cx="7" cy="7" r="4.6" fill="#f4f7fb" stroke="#333" stroke-width="1.3"/></svg>
<div style="left:932.5px;top:78.4px;width:80px;height:16px;background:#fff;border:1px solid #c3c3c3;"></div>
<div class="t" style="left:935.5px;top:76.80000000000001px;height:19px;line-height:19px;font-size:11.5px;letter-spacing:-0.672px;">71%</div>
<svg style="left:998.5px;top:84.9px;" width="6" height="3.5" viewBox="0 0 6 3.5"><path d="M0 0h6L3.0 3.5z" fill="#000"/></svg>
<div style="left:1015px;top:78px;width:1px;height:18px;background:#c6c6c6;"></div>
<svg style="left:1020px;top:77px;" width="17" height="20" viewBox="0 0 17 20"><rect x="1" y="1" width="15" height="18" fill="#f0c6ee" stroke="#8a2a86" stroke-width="1.4"/><path d="M8.5 1 V19 M1 9 H8.5 M8.5 12H16" stroke="#8a2a86" stroke-width="1.4"/><rect x="2.5" y="3" width="4.5" height="4.5" fill="#b765c9"/><rect x="10" y="3" width="4.5" height="7" fill="#b765c9"/></svg>
<svg style="left:1042.5px;top:77px;" width="22" height="20" viewBox="0 0 22 20"><rect x=".7" y=".7" width="20.6" height="18.6" fill="#bfe4f4" stroke="#2a7fa8" stroke-width="1.4"/><path d="M2 13 L11 7 L20 13 L11 19 Z M6.5 10 L15.5 16 M15.5 10 L6.5 16 M2 16.5 L11 10.5 L20 16.5" fill="none" stroke="#176a94" stroke-width="1.2"/></svg>
<div style="left:1072.5px;top:78.4px;width:85.5px;height:16px;background:#fff;border:1px solid #c3c3c3;"></div>
<div class="t" style="left:1075.5px;top:76.80000000000001px;height:19px;line-height:19px;font-size:11.5px;letter-spacing:-0.416px;">Plan 2D</div>
<div style="left:1139.0px;top:78.4px;width:19px;height:16px;background:#fff;border:1px solid #b0b0b0;"></div>
<svg style="left:1144.0px;top:84.4px;" width="8" height="4.5" viewBox="0 0 8 4.5"><path d="M0 0h8L4.0 4.5z" fill="#000"/></svg>
<div style="left:1162px;top:78px;width:1px;height:18px;background:#c6c6c6;"></div>
<svg style="left:1168px;top:78px;" width="19" height="18" viewBox="0 0 19 18"><path d="M3 15 L14 4" stroke="#1e8a2e" stroke-width="1.6"/><path d="M3 15 H15" stroke="#c22" stroke-width="1.6"/><circle cx="6" cy="4.5" r="2.6" fill="#eee" stroke="#222" stroke-width="1.2"/><path d="M6 7 V12" stroke="#222" stroke-width="1.4"/><rect x="12" y="11" width="5" height="6" rx="1" fill="#ddd" stroke="#222"/></svg>
<div style="left:1191.7px;top:78.4px;width:51px;height:16px;background:#fff;border:1px solid #c3c3c3;"></div>
<div class="t" style="left:1194.5px;top:76.8px;height:19px;line-height:19px;font-size:11.5px;letter-spacing:0.004px;">0,00°</div>
<svg style="left:1247px;top:79px;" width="17" height="16" viewBox="0 0 17 16"><rect x="1" y="1.5" width="15" height="13" fill="#e4e4e4" stroke="#666"/><rect x="3" y="3.5" width="5" height="4" fill="#999"/><rect x="9.5" y="3.5" width="5" height="4" fill="#bbb"/><path d="M3 10h11M3 12.5h11" stroke="#888"/></svg>
<div style="left:1275px;top:78.4px;width:85.5px;height:16px;background:#fff;border:1px solid #c3c3c3;"></div>
<div class="t" style="left:1278px;top:76.80000000000001px;height:19px;line-height:19px;font-size:11.5px;letter-spacing:-0.416px;">Plan 2D</div>
<div style="left:1341.5px;top:78.4px;width:19px;height:16px;background:#fff;border:1px solid #b0b0b0;"></div>
<svg style="left:1346.5px;top:84.4px;" width="8" height="4.5" viewBox="0 0 8 4.5"><path d="M0 0h8L4.0 4.5z" fill="#000"/></svg>
<div style="left:1364px;top:78px;width:1px;height:18px;background:#c6c6c6;"></div>
<div style="left:1366.5px;top:78.4px;width:42px;height:16px;background:#fff;border:1px solid #c3c3c3;"></div>
<svg style="left:1369px;top:79px;" width="17" height="16" viewBox="0 0 17 16"><path d="M2 8 C2 4 5 4.5 5.5 6 C7 4.5 11 4.5 12.5 6 L16 4 L14 9 C14 13 11.5 15 9 15 C6 15 4 13 4 10 C2.5 10 2 9 2 8 Z" fill="#9a95dc" stroke="#3a3a7a" stroke-width="1"/><ellipse cx="9" cy="4.5" rx="2.5" ry="1.5" fill="#c9c4f0" stroke="#3a3a7a"/></svg>
<div style="left:1389.5px;top:79px;width:1px;height:16px;background:#c3c3c3;"></div>
<svg style="left:1394px;top:85px;" width="8" height="4.5" viewBox="0 0 8 4.5"><path d="M0 0h8L4.0 4.5z" fill="#000"/></svg>
<div class="t" style="left:1449px;top:78px;height:14px;line-height:14px;font-size:11px;color:#333;">...</div>
<div style="left:1470px;top:81px;width:24px;height:11.5px;background:#a3a3a3;border-radius:4px;"></div>
<svg style="left:1479.5px;top:83.5px;" width="5" height="7" viewBox="0 0 5 7"><path d="M0 0L5 3.5L0 7z" fill="#fff"/></svg>
<div style="left:253px;top:99px;width:1249.5px;height:33px;background:#f0f0f0;border-top:1px solid #d5d5d5;border-left:1px solid #c8c8c8;border-right:1px solid #bdbdbd;"></div>
<svg style="left:262px;top:103.5px;" width="30" height="24" viewBox="0 0 30 24"><path d="M3 19 L21 5" stroke="#444" stroke-width="1.2"/><path d="M2 20 L3.5 14.5 L7.5 19 Z M22 4 L20.5 9.5 L16.5 5 Z" fill="#fff" stroke="#444" stroke-width="1"/><g fill="#fff" stroke="#444" stroke-width="1"><circle cx="9" cy="14.3" r="2"/><circle cx="15" cy="9.7" r="2"/></g></svg>
<svg style="left:274px;top:109px;" width="14" height="14" viewBox="0 0 14 14"><circle cx="7" cy="7" r="5.5" fill="#fff" stroke="#d0272d" stroke-width="2.6"/><path d="M3 3.5 L11 10.5" stroke="#d0272d" stroke-width="2.6"/></svg>
<div style="left:294px;top:104px;width:30px;height:23.5px;background:#cce4f7;border:1px solid #2f8fd6;"></div>
<svg style="left:297px;top:103.5px;" width="30" height="24" viewBox="0 0 30 24"><path d="M3 19 L21 5" stroke="#444" stroke-width="1.2"/><path d="M2 20 L3.5 14.5 L7.5 19 Z M22 4 L20.5 9.5 L16.5 5 Z" fill="#fff" stroke="#444" stroke-width="1"/><g fill="#fff" stroke="#444" stroke-width="1"><circle cx="9" cy="14.3" r="2"/><circle cx="15" cy="9.7" r="2"/></g></svg>
<svg style="left:329px;top:103.5px;" width="30" height="24" viewBox="0 0 30 24"><path d="M3 19 L21 5" stroke="#444" stroke-width="1.2"/><path d="M2 20 L3.5 14.5 L7.5 19 Z M22 4 L20.5 9.5 L16.5 5 Z" fill="#fff" stroke="#444" stroke-width="1"/><g fill="#fff" stroke="#444" stroke-width="1"><circle cx="9" cy="14.3" r="2"/><circle cx="15" cy="9.7" r="2"/></g><g transform="translate(5 0)"><path d="M3 19 L21 5" stroke="#444" stroke-width="1.2"/><path d="M2 20 L3.5 14.5 L7.5 19 Z M22 4 L20.5 9.5 L16.5 5 Z" fill="#fff" stroke="#444" stroke-width="1"/><g fill="#fff" stroke="#444" stroke-width="1"><circle cx="9" cy="14.3" r="2"/><circle cx="15" cy="9.7" r="2"/></g></g></svg>
<div style="left:365.5px;top:105px;width:1px;height:22px;background:#c6c6c6;"></div>
<div style="left:373.5px;top:104px;width:30px;height:23.5px;background:#cce4f7;border:1px solid #2f8fd6;"></div>
<svg style="left:375px;top:105px;" width="22" height="22" viewBox="0 0 22 22"><rect x="6" y="3.5" width="11.5" height="5" rx="1.2" fill="#fff" stroke="#222" stroke-width="1.1"/><path d="M8.3 6h7" stroke="#111" stroke-width="1.6"/><rect x="2" y="12" width="5.5" height="6.5" fill="#e0a868" stroke="#8a6a40" stroke-width=".8"/><rect x="15" y="12" width="5.5" height="6.5" fill="#e0a868" stroke="#8a6a40" stroke-width=".8"/></svg>
<div style="left:1470px;top:110px;width:24px;height:11.5px;background:#a3a3a3;border-radius:4px;"></div>
<div style="left:253px;top:132px;width:1249.5px;height:881px;background:#f9f8f3;border-left:1.5px solid #a8b0b8;border-right:1px solid #bdbdbd;border-bottom:1px solid #c0c0c0;"></div>
<svg style="left:254.5px;top:132px" width="470" height="880" viewBox="254.5 132 470 880"><path d="M363.3 155.7 A76 76 0 0 1 382.3 205.6" fill="none" stroke="#1a1a1a" stroke-width="1"/><g transform="translate(310.5 208.0) rotate(-45)"><rect x="0.5" y="-5" width="73.5" height="5.2" fill="#c6c6c6" stroke="#444" stroke-width="0.8"/><text x="68" y="7.3" text-anchor="end" font-size="8.7" fill="#2e2e2e" font-family="Liberation Sans, sans-serif">NAME1</text></g><rect x="299.2" y="205.7" width="9" height="4.6" fill="#c9c9c9" stroke="#000" stroke-width="1.25"/><path d="M304.4 205.7 v4.6" stroke="#000" stroke-width="1.2"/><rect x="381.5" y="205.7" width="9" height="4.6" fill="#c9c9c9" stroke="#000" stroke-width="1.25"/><path d="M385.3 205.7 v4.6" stroke="#000" stroke-width="1.2"/><rect x="285.4" y="167.7" width="10.2" height="4.8" fill="#cdcdcd" stroke="#000" stroke-width="1.2"/><path d="M290.3 167.7v4.8M288.6 162v5.5" stroke="#000" stroke-width="1.1"/><path d="M301.3 339.4 A76 76 0 0 1 320.3 389.3" fill="none" stroke="#1a1a1a" stroke-width="1"/><g transform="translate(248.5 391.7) rotate(-45)"><rect x="0.5" y="-5" width="73.5" height="5.2" fill="#c6c6c6" stroke="#444" stroke-width="0.8"/><text x="68" y="7.3" text-anchor="end" font-size="8.7" fill="#2e2e2e" font-family="Liberation Sans, sans-serif">NAME1</text></g><rect x="237.2" y="389.4" width="9" height="4.6" fill="#c9c9c9" stroke="#000" stroke-width="1.25"/><path d="M242.4 389.4 v4.6" stroke="#000" stroke-width="1.2"/><rect x="319.5" y="389.4" width="9" height="4.6" fill="#c9c9c9" stroke="#000" stroke-width="1.25"/><path d="M323.3 389.4 v4.6" stroke="#000" stroke-width="1.2"/><path d="M289.7 562.5 A76 76 0 0 1 308.7 612.4" fill="none" stroke="#1a1a1a" stroke-width="1"/><g transform="translate(236.9 614.8) rotate(-45)"><rect x="0.5" y="-5" width="73.5" height="5.2" fill="#c6c6c6" stroke="#444" stroke-width="0.8"/><text x="68" y="7.3" text-anchor="end" font-size="8.7" fill="#2e2e2e" font-family="Liberation Sans, sans-serif">NAME1</text></g><rect x="225.6" y="612.5" width="9" height="4.6" fill="#c9c9c9" stroke="#000" stroke-width="1.25"/><path d="M230.8 612.5 v4.6" stroke="#000" stroke-width="1.2"/><rect x="307.9" y="612.5" width="9" height="4.6" fill="#c9c9c9" stroke="#000" stroke-width="1.25"/><path d="M311.7 612.5 v4.6" stroke="#000" stroke-width="1.2"/><path d="M363.8 722.5 A76 76 0 0 1 382.8 772.4" fill="none" stroke="#1a1a1a" stroke-width="1"/><g transform="translate(311.0 774.8) rotate(-45)"><rect x="0.5" y="-5" width="73.5" height="5.2" fill="#c6c6c6" stroke="#444" stroke-width="0.8"/><text x="68" y="7.3" text-anchor="end" font-size="8.7" fill="#2e2e2e" font-family="Liberation Sans, sans-serif">NAME1</text></g><rect x="299.7" y="772.5" width="9" height="4.6" fill="#c9c9c9" stroke="#000" stroke-width="1.25"/><path d="M304.9 772.5 v4.6" stroke="#000" stroke-width="1.2"/><rect x="382.0" y="772.5" width="9" height="4.6" fill="#c9c9c9" stroke="#000" stroke-width="1.25"/><path d="M385.8 772.5 v4.6" stroke="#000" stroke-width="1.2"/><path d="M301.3 906.7 A76 76 0 0 1 320.3 956.6" fill="none" stroke="#1a1a1a" stroke-width="1"/><g transform="translate(248.5 959.0) rotate(-45)"><rect x="0.5" y="-5" width="73.5" height="5.2" fill="#c6c6c6" stroke="#444" stroke-width="0.8"/><text x="68" y="7.3" text-anchor="end" font-size="8.7" fill="#2e2e2e" font-family="Liberation Sans, sans-serif">NAME1</text></g><rect x="237.2" y="956.7" width="9" height="4.6" fill="#c9c9c9" stroke="#000" stroke-width="1.25"/><path d="M242.4 956.7 v4.6" stroke="#000" stroke-width="1.2"/><rect x="319.5" y="956.7" width="9" height="4.6" fill="#c9c9c9" stroke="#000" stroke-width="1.25"/><path d="M323.3 956.7 v4.6" stroke="#000" stroke-width="1.2"/><path d="M451.3 377.4 A76 76 0 0 1 470.3 427.3" fill="none" stroke="#1a1a1a" stroke-width="1"/><g transform="translate(398.5 429.7) rotate(-45)"><rect x="0.5" y="-5" width="73.5" height="5.2" fill="#fff" stroke="#333" stroke-width="0.8"/><rect x="0.5" y="-5" width="9" height="5.2" fill="#b9b9b9" stroke="#333" stroke-width="0.8"/><rect x="65.0" y="-5" width="9" height="5.2" fill="#b9b9b9" stroke="#333" stroke-width="0.8"/><text x="68" y="8.3" text-anchor="end" font-size="8.7" fill="#2e2e2e" font-family="Liberation Sans, sans-serif">NAME1+Vitre</text><text x="68" y="16.6" text-anchor="end" font-size="8.7" fill="#2e2e2e" font-family="Liberation Sans, sans-serif">Option 5</text></g><rect x="387.2" y="427.4" width="9" height="4.6" fill="#c9c9c9" stroke="#000" stroke-width="1.25"/><path d="M392.4 427.4 v4.6" stroke="#000" stroke-width="1.2"/><rect x="469.5" y="427.4" width="9" height="4.6" fill="#c9c9c9" stroke="#000" stroke-width="1.25"/><path d="M473.3 427.4 v4.6" stroke="#000" stroke-width="1.2"/><path d="M451.3 556.0 A76 76 0 0 1 470.3 605.9" fill="none" stroke="#1a1a1a" stroke-width="1"/><g transform="translate(398.5 608.3) rotate(-45)"><rect x="0.5" y="-5" width="73.5" height="5.2" fill="#fff" stroke="#333" stroke-width="0.8"/><rect x="0.5" y="-5" width="9" height="5.2" fill="#b9b9b9" stroke="#333" stroke-width="0.8"/><rect x="65.0" y="-5" width="9" height="5.2" fill="#b9b9b9" stroke="#333" stroke-width="0.8"/><text x="68" y="8.3" text-anchor="end" font-size="8.7" fill="#2e2e2e" font-family="Liberation Sans, sans-serif">NAME1+Vitre</text><text x="68" y="16.6" text-anchor="end" font-size="8.7" fill="#2e2e2e" font-family="Liberation Sans, sans-serif">Option 5</text></g><rect x="387.2" y="606.0" width="9" height="4.6" fill="#c9c9c9" stroke="#000" stroke-width="1.25"/><path d="M392.4 606.0 v4.6" stroke="#000" stroke-width="1.2"/><rect x="469.5" y="606.0" width="9" height="4.6" fill="#c9c9c9" stroke="#000" stroke-width="1.25"/><path d="M473.3 606.0 v4.6" stroke="#000" stroke-width="1.2"/><path d="M451.3 944.7 A76 76 0 0 1 470.3 994.6" fill="none" stroke="#1a1a1a" stroke-width="1"/><g transform="translate(398.5 997.0) rotate(-45)"><rect x="0.5" y="-5" width="73.5" height="5.2" fill="#fff" stroke="#333" stroke-width="0.8"/><rect x="0.5" y="-5" width="9" height="5.2" fill="#b9b9b9" stroke="#333" stroke-width="0.8"/><rect x="65.0" y="-5" width="9" height="5.2" fill="#b9b9b9" stroke="#333" stroke-width="0.8"/><text x="68" y="8.3" text-anchor="end" font-size="8.7" fill="#2e2e2e" font-family="Liberation Sans, sans-serif">NAME1+Vitre</text><text x="68" y="16.6" text-anchor="end" font-size="8.7" fill="#2e2e2e" font-family="Liberation Sans, sans-serif">Option 5</text></g><rect x="387.2" y="994.7" width="9" height="4.6" fill="#c9c9c9" stroke="#000" stroke-width="1.25"/><path d="M392.4 994.7 v4.6" stroke="#000" stroke-width="1.2"/><rect x="469.5" y="994.7" width="9" height="4.6" fill="#c9c9c9" stroke="#000" stroke-width="1.25"/><path d="M473.3 994.7 v4.6" stroke="#000" stroke-width="1.2"/><path d="M535.3 741.9 A76 76 0 0 1 554.3 791.8" fill="none" stroke="#1a1a1a" stroke-width="1"/><g transform="translate(482.5 794.2) rotate(-45)"><rect x="0.5" y="-5" width="73.5" height="5.2" fill="#c6c6c6" stroke="#444" stroke-width="0.8"/><path d="M4 0.4 V12.2 H71.5 V0.4" fill="none" stroke="#0a0a0a" stroke-width="1.5"/><text x="67" y="-7" text-anchor="end" font-size="8.7" fill="#2e2e2e" font-family="Liberation Sans, sans-serif">Option 4</text><text x="68" y="7.3" text-anchor="end" font-size="8.7" fill="#2e2e2e" font-family="Liberation Sans, sans-serif">NAME1</text><text x="67.5" y="18.5" text-anchor="end" font-size="8.7" fill="#2e2e2e" font-family="Liberation Sans, sans-serif">Option 3</text></g><rect x="471.2" y="791.9" width="9" height="4.6" fill="#c9c9c9" stroke="#000" stroke-width="1.25"/><path d="M476.4 791.9 v4.6" stroke="#000" stroke-width="1.2"/><rect x="553.5" y="791.9" width="9" height="4.6" fill="#c9c9c9" stroke="#000" stroke-width="1.25"/><path d="M557.3 791.9 v4.6" stroke="#000" stroke-width="1.2"/></svg>
<div style="left:247px;top:133.3px;width:145.5px;height:28px;background:#bfcddb;border:2.7px solid #f3f5f8;"></div>
<div style="left:246.5px;top:161.2px;width:146px;height:1.6px;background:#6a6a6a;"></div>
<div class="t" style="left:252.5px;top:136.6px;height:23px;line-height:23px;font-size:12.5px;letter-spacing:0.062px;font-weight:bold;">Explorateur - Calques</div>

<!-- p_sheet -->
<svg style="left:700px;top:132px" width="801" height="880.5" viewBox="700 132 801 880.5" shape-rendering="crispEdges"><path d="M723.5 134.5H1500" stroke="#000" stroke-width="1"/><path d="M723.5 148.5H1500" stroke="#000" stroke-width="1"/><path d="M723.5 163.5H1500" stroke="#000" stroke-width="1"/><path d="M723.5 177.5H1500" stroke="#000" stroke-width="1"/><path d="M723.5 191.5H1500" stroke="#000" stroke-width="1"/><path d="M723.5 205.5H1500" stroke="#000" stroke-width="1"/><path d="M723.5 219.5H1500" stroke="#000" stroke-width="1"/><path d="M723.5 234.5H1500" stroke="#000" stroke-width="1"/><path d="M723.5 253.5H1500" stroke="#000" stroke-width="1"/><path d="M723.5 317.5H1500" stroke="#000" stroke-width="1"/><path d="M723.5 334.5H1500" stroke="#000" stroke-width="1"/><path d="M723.5 348.5H1500" stroke="#000" stroke-width="1"/><path d="M723.5 362.5H1500" stroke="#000" stroke-width="1"/><path d="M723.5 376.5H1500" stroke="#000" stroke-width="1"/><path d="M723.5 391.5H1500" stroke="#000" stroke-width="1"/><path d="M723.5 405.5H1500" stroke="#000" stroke-width="1"/><path d="M723.5 425.5H1500" stroke="#000" stroke-width="1"/><path d="M723.5 485.5H1500" stroke="#000" stroke-width="1"/><path d="M723.5 502.5H1500" stroke="#000" stroke-width="1"/><path d="M723.5 516.5H1500" stroke="#000" stroke-width="1"/><path d="M723.5 531.5H1500" stroke="#000" stroke-width="1"/><path d="M723.5 545.5H1500" stroke="#000" stroke-width="1"/><path d="M723.5 562.5H1500" stroke="#000" stroke-width="1"/><path d="M723.5 576.5H1500" stroke="#000" stroke-width="1"/><path d="M723.5 590.5H1500" stroke="#000" stroke-width="1"/><path d="M723.5 604.5H1500" stroke="#000" stroke-width="1"/><path d="M723.5 618.5H1500" stroke="#000" stroke-width="1"/><path d="M723.5 633.5H1500" stroke="#000" stroke-width="1"/><path d="M723.5 647.5H1500" stroke="#000" stroke-width="1"/><path d="M723.5 661.5H1500" stroke="#000" stroke-width="1"/><path d="M723.5 675.5H1500" stroke="#000" stroke-width="1"/><path d="M723.5 689.5H1500" stroke="#000" stroke-width="1"/><path d="M723.5 704.5H1500" stroke="#000" stroke-width="1"/><path d="M723.5 718.5H1500" stroke="#000" stroke-width="1"/><path d="M723.5 732.5H1500" stroke="#000" stroke-width="1"/><path d="M723.5 746.5H1500" stroke="#000" stroke-width="1"/><path d="M723.5 760.5H1500" stroke="#000" stroke-width="1"/><path d="M723.5 774.5H1500" stroke="#000" stroke-width="1"/><path d="M723.5 789.5H1500" stroke="#000" stroke-width="1"/><path d="M723.5 803.5H1500" stroke="#000" stroke-width="1"/><path d="M723.5 817.5H1500" stroke="#000" stroke-width="1"/><path d="M723.5 831.5H1500" stroke="#000" stroke-width="1"/><path d="M723.5 845.5H1500" stroke="#000" stroke-width="1"/><path d="M723.5 860.5H1500" stroke="#000" stroke-width="1"/><path d="M723.5 874.5H1500" stroke="#000" stroke-width="1"/><path d="M723.5 888.5H1500" stroke="#000" stroke-width="1"/><path d="M723.5 902.5H1500" stroke="#000" stroke-width="1"/><path d="M723.5 916.5H1500" stroke="#000" stroke-width="1"/><path d="M723.5 931.5H1500" stroke="#000" stroke-width="1"/><path d="M723.5 945.5H1500" stroke="#000" stroke-width="1"/><path d="M723.5 959.5H1500" stroke="#000" stroke-width="1"/><path d="M723.5 973.5H1500" stroke="#000" stroke-width="1"/><path d="M723.5 987.5H1500" stroke="#000" stroke-width="1"/><path d="M723.5 1001.5H1500" stroke="#000" stroke-width="1"/><path d="M836.5 132V234.4" stroke="#000" stroke-width="1"/><path d="M1001.5 132V234.4" stroke="#000" stroke-width="1"/><path d="M1085.5 132V234.4" stroke="#000" stroke-width="1"/><path d="M1299.5 132V234.4" stroke="#000" stroke-width="1"/><path d="M836.5 253.3V405.2" stroke="#000" stroke-width="1"/><path d="M1001.5 253.3V405.2" stroke="#000" stroke-width="1"/><path d="M1085.5 253.3V405.2" stroke="#000" stroke-width="1"/><path d="M1299.5 253.3V405.2" stroke="#000" stroke-width="1"/><path d="M836.5 425.5V1011" stroke="#000" stroke-width="1"/><path d="M1001.5 425.5V604.5M1001.5 618V1011" stroke="#000" stroke-width="1"/><path d="M1085.5 425.5V1011" stroke="#000" stroke-width="1"/><path d="M1299.5 425.5V1011" stroke="#000" stroke-width="1"/><path d="M723.2 132V1011" stroke="#dd7d22" stroke-width="2" shape-rendering="auto"/><rect x="724.5" y="619" width="100.5" height="14" fill="#00ffff"/></svg>
<div class="t" style="left:725px;top:334.4px;height:14.4px;line-height:14.4px;font-size:9.4px;letter-spacing:0.010px;color:#3aa0d8;">CODE_OPTION02</div>
<div class="t" style="left:838px;top:334.4px;height:14.4px;line-height:14.4px;font-size:9.4px;letter-spacing:-0.053px;color:#111;">Choix 1</div>
<div class="t" style="left:1003px;top:334.4px;height:14.4px;line-height:14.4px;font-size:9.4px;letter-spacing:0.025px;color:#111;">PORTE A1</div>
<div class="t" style="left:1300.7px;top:334.4px;height:14.4px;line-height:14.4px;font-size:9.4px;letter-spacing:0.038px;color:#111;">b6d44af0-7adc-4761-a0da-80e4eb20c253</div>
<div class="t" style="left:725px;top:348.8px;height:13.9px;line-height:13.9px;font-size:9.4px;letter-spacing:0.010px;color:#3aa0d8;">CODE_OPTION02</div>
<div class="t" style="left:838px;top:348.8px;height:13.9px;line-height:13.9px;font-size:9.4px;letter-spacing:-0.053px;color:#111;">Choix 1</div>
<div class="t" style="left:1003px;top:348.8px;height:13.9px;line-height:13.9px;font-size:9.4px;letter-spacing:0.025px;color:#111;">PORTE A1</div>
<div class="t" style="left:1300.7px;top:348.8px;height:13.9px;line-height:13.9px;font-size:9.4px;letter-spacing:0.034px;color:#111;">2d62e580-d32e-46dd-8307-c55a82d3953b</div>
<div class="t" style="left:725px;top:362.7px;height:14.0px;line-height:14.0px;font-size:9.4px;letter-spacing:0.010px;color:#3aa0d8;">CODE_OPTION02</div>
<div class="t" style="left:838px;top:362.7px;height:14.0px;line-height:14.0px;font-size:9.4px;letter-spacing:-0.053px;color:#111;">Choix 1</div>
<div class="t" style="left:1003px;top:362.7px;height:14.0px;line-height:14.0px;font-size:9.4px;letter-spacing:0.025px;color:#111;">PORTE A1</div>
<div class="t" style="left:1300.7px;top:362.7px;height:14.0px;line-height:14.0px;font-size:9.4px;letter-spacing:0.027px;color:#111;">3d35df7a-bd26-4ac4-9f7b-80515d156471</div>
<div class="t" style="left:725px;top:376.7px;height:14.7px;line-height:14.7px;font-size:9.4px;letter-spacing:0.010px;color:#3aa0d8;">CODE_OPTION02</div>
<div class="t" style="left:838px;top:376.7px;height:14.7px;line-height:14.7px;font-size:9.4px;letter-spacing:-0.053px;color:#111;">Choix 1</div>
<div class="t" style="left:1003px;top:376.7px;height:14.7px;line-height:14.7px;font-size:9.4px;letter-spacing:0.025px;color:#111;">PORTE A1</div>
<div class="t" style="left:1300.7px;top:376.7px;height:14.7px;line-height:14.7px;font-size:9.4px;letter-spacing:0.048px;color:#111;">a13eea33-477f-42d6-a8ff-6b947d2ab692</div>
<div class="t" style="left:725px;top:391.4px;height:14.2px;line-height:14.2px;font-size:9.4px;letter-spacing:0.010px;color:#3aa0d8;">CODE_OPTION02</div>
<div class="t" style="left:838px;top:391.4px;height:14.2px;line-height:14.2px;font-size:9.4px;letter-spacing:-0.053px;color:#111;">Choix 1</div>
<div class="t" style="left:1003px;top:391.4px;height:14.2px;line-height:14.2px;font-size:9.4px;letter-spacing:0.025px;color:#111;">PORTE A1</div>
<div class="t" style="left:1300.7px;top:391.4px;height:14.2px;line-height:14.2px;font-size:9.4px;letter-spacing:0.058px;color:#111;">26812ab7-578d-4622-88be-f117c62ce03e</div>
<div class="t" style="left:1151.7px;top:406.1px;height:20.3px;line-height:20.3px;font-size:15.4px;letter-spacing:-0.130px;font-weight:bold;color:#2a96dc;">PORTES CONCERNÉES PAR L'OPTION 3</div>
<div style="left:722.5px;top:424px;width:112px;height:59px;"><div class="t" style="left:0;top:17px;width:112px;text-align:center;font-weight:bold;font-size:11.3px;line-height:14px;height:14px;letter-spacing:-.05px;">CODE MANUEL ET</div><div class="t" style="left:0;top:31px;width:112px;text-align:center;font-weight:bold;font-size:11.3px;line-height:14px;height:14px;letter-spacing:-.05px;">FIXE</div></div>
<div class="t" style="left:874.3px;top:426.3px;height:59.8px;line-height:59.8px;font-size:11.3px;letter-spacing:0.017px;font-weight:bold;color:#111;">TYPE DE CHOIX</div>
<div style="left:1300px;top:426px;width:199.5px;height:59px;overflow:hidden;"><div class="t" style="left:22.3px;top:0px;height:59px;line-height:59px;font-size:11.3px;letter-spacing:-0.037px;font-weight:bold;">PORTES CONCERNÉES PAR L'OPTION 3</div>
</div>
<div style="left:1486px;top:254px;width:13.7px;height:63px;overflow:hidden;"><div class="t" style="left:-163.7px;top:14.5px;height:34px;line-height:34px;font-size:11.3px;letter-spacing:-0.037px;font-weight:bold;">PORTES CONCERNÉES PAR L'OPTION 3</div>
</div>
<div class="t" style="left:725px;top:485.7px;height:17.0px;line-height:17.0px;font-size:9.4px;letter-spacing:0.010px;color:#3aa0d8;top:486.2px;">CODE_OPTION03</div>
<div class="t" style="left:980px;top:486.3px;height:17px;line-height:17px;font-size:9.4px;width:18.5px;text-align:right;color:#111;">2</div>
<div class="t" style="left:1064px;top:486.3px;height:17px;line-height:17px;font-size:9.4px;width:18.5px;text-align:right;color:#111;">2</div>
<div class="t" style="left:725px;top:502.7px;height:14.0px;line-height:14.0px;font-size:9.4px;letter-spacing:0.010px;color:#3aa0d8;">CODE_OPTION03</div>
<div class="t" style="left:838px;top:502.7px;height:14.0px;line-height:14.0px;font-size:9.4px;letter-spacing:-0.053px;color:#111;">Choix 1</div>
<div class="t" style="left:1003px;top:502.7px;height:14.0px;line-height:14.0px;font-size:9.4px;letter-spacing:0.025px;color:#111;">PORTE A1</div>
<div class="t" style="left:1300.7px;top:502.7px;height:14.0px;line-height:14.0px;font-size:9.4px;letter-spacing:0.015px;color:#111;">e79acb0f-cba1-45be-97e4-574acc054f51</div>
<div class="t" style="left:725px;top:516.7px;height:14.7px;line-height:14.7px;font-size:9.4px;letter-spacing:0.010px;color:#3aa0d8;">CODE_OPTION03</div>
<div class="t" style="left:838px;top:516.7px;height:14.7px;line-height:14.7px;font-size:9.4px;letter-spacing:-0.053px;color:#111;">Choix 1</div>
<div class="t" style="left:1003px;top:516.7px;height:14.7px;line-height:14.7px;font-size:9.4px;letter-spacing:0.025px;color:#111;">PORTE A1</div>
<div class="t" style="left:1300.7px;top:516.7px;height:14.7px;line-height:14.7px;font-size:9.4px;letter-spacing:0.049px;color:#111;">393c46ff-eb2e-4144-a721-7f1a6c1dbb95</div>
<div class="t" style="left:980px;top:547px;height:17px;line-height:17px;font-size:9.4px;width:18.5px;text-align:right;color:#111;">0</div>
<div class="t" style="left:838.5px;top:604.4px;height:14.3px;line-height:14.3px;font-size:8.6px;letter-spacing:0.371px;color:#111;">Ligne 54 : RunScript : ClearWSCellBefore</div>
<div class="t" style="left:838.5px;top:618.7px;height:14.4px;line-height:14.4px;font-size:8.6px;letter-spacing:0.354px;color:#111;">Ligne 55 : RunScript</div>
<div style="left:700px;top:132px;width:800px;height:879px;overflow:hidden;"><div class="t" style="left:25px;top:572.9px;height:14.0px;line-height:14.0px;font-size:9.4px;letter-spacing:-0.067px;color:#111;">PLUGIN-A0001</div>
<div class="t" style="left:600.7px;top:572.9px;height:14.0px;line-height:14.0px;font-size:9.4px;letter-spacing:0.027px;color:#111;">00c82d79-1d6a-43fe-9a90-d4d30f6b6777</div>
<div class="t" style="left:25px;top:586.9px;height:14.0px;line-height:14.0px;font-size:9.4px;letter-spacing:-0.067px;color:#111;">PLUGIN-A0001</div>
<div class="t" style="left:600.7px;top:586.9px;height:14.0px;line-height:14.0px;font-size:9.4px;letter-spacing:0.034px;color:#111;">2d62e580-d32e-46dd-8307-c55a82d3953b</div>
<div class="t" style="left:25px;top:600.9px;height:14.0px;line-height:14.0px;font-size:9.4px;letter-spacing:0.010px;color:#111;">CODE_OPTION02</div>
<div class="t" style="left:600.7px;top:600.9px;height:14.0px;line-height:14.0px;font-size:9.4px;letter-spacing:0.034px;color:#111;">2d62e580-d32e-46dd-8307-c55a82d3953b</div>
<div class="t" style="left:25px;top:614.9px;height:14.0px;line-height:14.0px;font-size:9.4px;letter-spacing:0.010px;color:#111;">CODE_OPTION01</div>
<div class="t" style="left:600.7px;top:614.9px;height:14.0px;line-height:14.0px;font-size:9.4px;letter-spacing:0.034px;color:#111;">2d62e580-d32e-46dd-8307-c55a82d3953b</div>
<div class="t" style="left:25px;top:628.9px;height:14.0px;line-height:14.0px;font-size:9.4px;letter-spacing:-0.067px;color:#111;">PLUGIN-A0001</div>
<div class="t" style="left:600.7px;top:628.9px;height:14.0px;line-height:14.0px;font-size:9.4px;letter-spacing:0.027px;color:#111;">2ec00d96-f16e-440f-9a72-880447b634e6</div>
<div class="t" style="left:25px;top:642.9px;height:15.0px;line-height:15.0px;font-size:9.4px;letter-spacing:-0.067px;color:#111;">PLUGIN-A0001</div>
<div class="t" style="left:600.7px;top:642.9px;height:15.0px;line-height:15.0px;font-size:9.4px;letter-spacing:0.027px;color:#111;">3d35df7a-bd26-4ac4-9f7b-80515d156471</div>
<div class="t" style="left:25px;top:657.9px;height:14.0px;line-height:14.0px;font-size:9.4px;letter-spacing:0.010px;color:#111;">CODE_OPTION02</div>
<div class="t" style="left:600.7px;top:657.9px;height:14.0px;line-height:14.0px;font-size:9.4px;letter-spacing:0.027px;color:#111;">3d35df7a-bd26-4ac4-9f7b-80515d156471</div>
<div class="t" style="left:25px;top:671.9px;height:14.0px;line-height:14.0px;font-size:9.4px;letter-spacing:0.010px;color:#111;">CODE_OPTION01</div>
<div class="t" style="left:600.7px;top:671.9px;height:14.0px;line-height:14.0px;font-size:9.4px;letter-spacing:0.027px;color:#111;">3d35df7a-bd26-4ac4-9f7b-80515d156471</div>
<div class="t" style="left:25px;top:685.9px;height:14.0px;line-height:14.0px;font-size:9.4px;letter-spacing:-0.067px;color:#111;">PLUGIN-A0001</div>
<div class="t" style="left:600.7px;top:685.9px;height:14.0px;line-height:14.0px;font-size:9.4px;letter-spacing:0.024px;color:#111;">5bfd6da6-2d50-4069-bce2-9950b5273c78</div>
<div class="t" style="left:25px;top:699.9px;height:14.0px;line-height:14.0px;font-size:9.4px;letter-spacing:-0.067px;color:#111;">PLUGIN-A0001</div>
<div class="t" style="left:600.7px;top:699.9px;height:14.0px;line-height:14.0px;font-size:9.4px;letter-spacing:0.027px;color:#111;">08b922af-7bf6-410b-907b-4c2a242a109e</div>
<div class="t" style="left:25px;top:713.9px;height:15.0px;line-height:15.0px;font-size:9.4px;letter-spacing:0.010px;color:#111;">CODE_OPTION01</div>
<div class="t" style="left:600.7px;top:713.9px;height:15.0px;line-height:15.0px;font-size:9.4px;letter-spacing:0.027px;color:#111;">08b922af-7bf6-410b-907b-4c2a242a109e</div>
<div class="t" style="left:25px;top:728.9px;height:14.0px;line-height:14.0px;font-size:9.4px;letter-spacing:-0.067px;color:#111;">PLUGIN-A0001</div>
<div class="t" style="left:600.7px;top:728.9px;height:14.0px;line-height:14.0px;font-size:9.4px;letter-spacing:0.032px;color:#111;">8c4db4b1-05c5-4502-a15f-74f26f59cc2b</div>
<div class="t" style="left:25px;top:742.9px;height:14.0px;line-height:14.0px;font-size:9.4px;letter-spacing:-0.067px;color:#111;">PLUGIN-A0001</div>
<div class="t" style="left:600.7px;top:742.9px;height:14.0px;line-height:14.0px;font-size:9.4px;letter-spacing:0.028px;color:#111;">8df214a2-5da3-4bc6-84d0-dde79bcec5f8</div>
<div class="t" style="left:25px;top:756.9px;height:14.0px;line-height:14.0px;font-size:9.4px;letter-spacing:-0.067px;color:#111;">PLUGIN-A0001</div>
<div class="t" style="left:600.7px;top:756.9px;height:14.0px;line-height:14.0px;font-size:9.4px;letter-spacing:0.009px;color:#111;">35dab800-8aad-460e-a7ba-c2a185bccc91</div>
<div class="t" style="left:25px;top:770.9px;height:14.0px;line-height:14.0px;font-size:9.4px;letter-spacing:-0.067px;color:#111;">PLUGIN-A0001</div>
<div class="t" style="left:600.7px;top:770.9px;height:14.0px;line-height:14.0px;font-size:9.4px;letter-spacing:0.005px;color:#111;">51c34452-81bd-4d65-aa72-bfaece4f3d11</div>
<div class="t" style="left:25px;top:784.9px;height:15.0px;line-height:15.0px;font-size:9.4px;letter-spacing:-0.067px;color:#111;">PLUGIN-A0001</div>
<div class="t" style="left:600.7px;top:784.9px;height:15.0px;line-height:15.0px;font-size:9.4px;letter-spacing:0.034px;color:#111;">92e58ff6-d136-4394-b2f0-a93e0a0dad79</div>
<div class="t" style="left:25px;top:799.9px;height:14.0px;line-height:14.0px;font-size:9.4px;letter-spacing:-0.067px;color:#111;">PLUGIN-A0001</div>
<div class="t" style="left:600.7px;top:799.9px;height:14.0px;line-height:14.0px;font-size:9.4px;letter-spacing:0.031px;color:#111;">151bcfa5-5758-47cb-aeda-2146703f2f70</div>
<div class="t" style="left:25px;top:813.9px;height:14.0px;line-height:14.0px;font-size:9.4px;letter-spacing:-0.067px;color:#111;">PLUGIN-A0001</div>
<div class="t" style="left:600.7px;top:813.9px;height:14.0px;line-height:14.0px;font-size:9.4px;letter-spacing:0.016px;color:#111;">308e7bbf-96f2-4beb-842a-89435f0a3c55</div>
<div class="t" style="left:25px;top:827.9px;height:14.0px;line-height:14.0px;font-size:9.4px;letter-spacing:-0.067px;color:#111;">PLUGIN-A0001</div>
<div class="t" style="left:600.7px;top:827.9px;height:14.0px;line-height:14.0px;font-size:9.4px;letter-spacing:0.049px;color:#111;">393c46ff-eb2e-4144-a721-7f1a6c1dbb95</div>
<div class="t" style="left:25px;top:841.9px;height:14.0px;line-height:14.0px;font-size:9.4px;letter-spacing:-0.067px;color:#111;">PLUGIN-A0001</div>
<div class="t" style="left:600.7px;top:841.9px;height:14.0px;line-height:14.0px;font-size:9.4px;letter-spacing:0.058px;color:#111;">26812ab7-578d-4622-88be-f117c62ce03e</div>
<div class="t" style="left:25px;top:855.9px;height:14.0px;line-height:14.0px;font-size:9.4px;letter-spacing:0.010px;color:#111;">CODE_OPTION02</div>
<div class="t" style="left:600.7px;top:855.9px;height:14.0px;line-height:14.0px;font-size:9.4px;letter-spacing:0.058px;color:#111;">26812ab7-578d-4622-88be-f117c62ce03e</div>
<div class="t" style="left:25px;top:869.9px;height:14.3px;line-height:14.3px;font-size:9.4px;letter-spacing:0.010px;color:#111;">CODE_OPTION01</div>
<div class="t" style="left:600.7px;top:869.9px;height:14.3px;line-height:14.3px;font-size:9.4px;letter-spacing:0.058px;color:#111;">26812ab7-578d-4622-88be-f117c62ce03e</div>
</div>
<div style="left:649.5px;top:538.5px;width:386.5px;height:133.6px;border:3.8px solid #e20f0c;border-radius:6.5px;filter:drop-shadow(2.2px 2.4px 2.4px rgba(60,60,50,.42));"></div>
<div style="left:825px;top:606.6px;width:23.4px;height:38.6px;background:#000;border-radius:11.7px;"></div>

<!-- p_rm -->
<div style="left:392.2px;top:93px;width:1094.8px;height:242.6px;background:#f0f0f0;border-left:3.8px solid #f6f9fc;border-top:3px solid #f6f9fc;border-right:2.2px solid #858585;border-bottom:1.8px solid #7c7c7c;"></div>
<div style="left:396px;top:96px;width:1088.8px;height:23.3px;background:#bfcddb;"></div>
<div class="t" style="left:398px;top:96px;height:23px;line-height:23px;font-size:12.5px;letter-spacing:-0.096px;font-weight:bold;">Gestionnaire des ressources</div>
<div class="t" style="left:1430px;top:100px;height:15px;line-height:15px;font-size:11.5px;font-weight:bold;">?</div>
<svg style="left:1449px;top:101px;" width="9" height="12" viewBox="0 0 9 12"><path d="M2.6 1.2 H6.6 V6 H2.6 Z M1 6.2 H8.2 M4.6 6.2 V11" fill="none" stroke="#111" stroke-width="1.3"/><path d="M5.9 1.2 V6" stroke="#111" stroke-width="1.6"/></svg>
<svg style="left:1470px;top:103px;" width="9" height="9" viewBox="0 0 9 9"><path d="M1 1l6.5 6.5M7.5 1L1 7.5" stroke="#111" stroke-width="1.7"/></svg>
<div style="left:397px;top:120.5px;width:34px;height:25px;background:#cce4f7;border:1px solid #2f8fd6;"></div>
<div style="left:430px;top:120.5px;width:34px;height:25px;background:#cce4f7;border:1px solid #2f8fd6;"></div>
<div style="left:463px;top:120.5px;width:34px;height:25px;background:#cce4f7;border:1px solid #2f8fd6;"></div>
<div style="left:496px;top:120.5px;width:34px;height:25px;background:#cce4f7;border:1px solid #2f8fd6;"></div>
<div style="left:529px;top:120.5px;width:34px;height:25px;background:#cce4f7;border:1px solid #2f8fd6;"></div>
<svg style="left:405.2px;top:124.7px;" width="16.6" height="16.6" viewBox="0 0 16.6 16.6"><circle cx="8.3" cy="8.3" r="7.3" fill="#fff" stroke="#111" stroke-width="1.3"/><path d="M5.700000000000001 5.9 L8.3 11.3 L10.9 5.9" fill="none" stroke="#111" stroke-width="1.5"/></svg>
<svg style="left:436px;top:125px;" width="22" height="16" viewBox="0 0 22 16"><g fill="#d8d8d8" stroke="#333" stroke-width="1"><circle cx="6" cy="5.5" r="2.2"/><circle cx="15.5" cy="5.5" r="2.2"/><rect x="3" y="8" width="6" height="7" rx="1.5"/><rect x="12.5" y="8" width="6" height="7" rx="1.5"/><circle cx="10.8" cy="4" r="2.4"/><rect x="7.6" y="6.6" width="6.4" height="8.4" rx="1.5"/></g></svg>
<svg style="left:472px;top:124px;" width="14" height="17" viewBox="0 0 14 17"><path d="M4 8 V5 a3 3 0 0 1 6 0 V8" fill="none" stroke="#666" stroke-width="1.5"/><rect x="2" y="7.5" width="10" height="8.5" rx="1.5" fill="#8a8a8a" stroke="#444"/><rect x="4" y="10" width="6" height="2.4" fill="#bdbdbd"/></svg>
<svg style="left:502px;top:123px;" width="20" height="19" viewBox="0 0 20 19"><path d="M10 1.5 L12.6 7 L18.6 7.7 L14.2 11.8 L15.4 17.7 L10 14.8 L4.6 17.7 L5.8 11.8 L1.4 7.7 L7.4 7 Z" fill="#f6d23a" stroke="#6b5a10" stroke-width="1.1" stroke-linejoin="round"/></svg>
<svg style="left:534px;top:125px;" width="23" height="16" viewBox="0 0 23 16"><path d="M6 14.5 C1.5 14.5 1 9 5 8.3 C5 4 11 2.5 13 6 C16 4.5 19 7 18.3 9.2 C22 9.5 22 14.5 18 14.5 Z" fill="#aaa4ea" stroke="#3a3a7a" stroke-width="1.1"/></svg>
<div style="left:566px;top:121px;width:1px;height:24px;background:#cfcfcf;"></div>
<svg style="left:576.5px;top:123.5px;" width="19" height="19" viewBox="0 0 19 19"><circle cx="9.5" cy="9.5" r="6.6" fill="none" stroke="#3c3c3c" stroke-width="4" stroke-dasharray="2.7 2.48"/><circle cx="9.5" cy="9.5" r="5.6" fill="#dcdcdc" stroke="#3c3c3c" stroke-width="1.1"/><circle cx="9.5" cy="9.5" r="6.6" fill="none" stroke="#dcdcdc" stroke-width="2" stroke-dasharray="1.7 3.48" stroke-dashoffset="-.5"/><circle cx="9.5" cy="9.5" r="2.1" fill="#fff" stroke="#3c3c3c" stroke-width="1"/></svg>
<svg style="left:607px;top:131.5px;" width="6" height="3.5" viewBox="0 0 6 3.5"><path d="M0 0h6L3.0 3.5z" fill="#000"/></svg>
<div style="left:620px;top:121px;width:1px;height:24px;background:#cfcfcf;"></div>
<svg style="left:630.5px;top:125px;" width="18" height="16" viewBox="0 0 18 16"><path d="M1.5 8 L9.5 1.5 V5.6 L15.5 5 Q17 5 17 6.5 V9.5 Q17 11 15.5 11 L9.5 10.4 V14.5 Z" fill="#c2c2c2" stroke="#333" stroke-width="1.1" stroke-linejoin="round"/></svg>
<svg style="left:663.5px;top:125px;" width="18" height="16" viewBox="0 0 18 16"><path d="M1.5 8 L9.5 1.5 V5.6 L15.5 5 Q17 5 17 6.5 V9.5 Q17 11 15.5 11 L9.5 10.4 V14.5 Z" fill="#c2c2c2" stroke="#333" stroke-width="1.1" stroke-linejoin="round" transform="translate(18 0) scale(-1 1)"/></svg>
<div style="left:693.7px;top:121px;width:1px;height:24px;background:#cfcfcf;"></div>
<svg style="left:704px;top:124px;" width="19" height="17" viewBox="0 0 19 17"><path d="M1.5 9 L9.5 2 L17.5 9 L15.5 9 V15.5 H3.5 V9 Z" fill="#f3f0f0" stroke="#e2d6d6" stroke-width="1.2"/><rect x="6" y="10" width="3" height="3" fill="#e9e0e0"/><rect x="10.5" y="10" width="3" height="3" fill="#e9e0e0"/></svg>
<div style="left:735px;top:121px;width:1px;height:24px;background:#cfcfcf;"></div>
<svg style="left:746.5px;top:124.5px;" width="19" height="18" viewBox="0 0 19 18"><path d="M.8 2.5 H6 L7.5 4.3 H16.5 V15 H.8 Z" fill="#e4dcc0" stroke="#5e5a48"/><path d="M.8 9 H16.5 V15 H.8 Z" fill="#efe9d4" stroke="#5e5a48" stroke-width=".8"/><path d="M12 .8 L16.8 5.4 H14 V9 H10 V5.4 H7.2 Z" fill="#2fa84a" stroke="#136a27" stroke-width=".9"/></svg>
<div style="left:776px;top:121px;width:1px;height:24px;background:#cfcfcf;"></div>
<div style="left:779.5px;top:120.5px;width:33px;height:25px;background:#cce4f7;border:1px solid #2f8fd6;"></div>
<svg style="left:787.5px;top:125.5px;" width="17" height="15" viewBox="0 0 17 15"><g fill="#fff" stroke="#333" stroke-width="1.2"><rect x="1.5" y="1.2" width="5" height="4.8" rx=".8"/><rect x="10" y="1.2" width="5" height="4.8" rx=".8"/><rect x="1.5" y="9" width="5" height="4.8" rx=".8"/><rect x="10" y="9" width="5" height="4.8" rx=".8"/></g></svg>
<svg style="left:820px;top:126px;" width="17" height="14" viewBox="0 0 17 14"><g fill="#fff" stroke="#333" stroke-width="1"><rect x="1" y="1" width="14.5" height="2.6" rx="1"/><rect x="1" y="5.5" width="14.5" height="2.6" rx="1"/><rect x="1" y="10" width="14.5" height="2.6" rx="1"/></g></svg>
<svg style="left:853.5px;top:125.5px;" width="17" height="15" viewBox="0 0 17 15"><g fill="#fff" stroke="#333" stroke-width="1.1"><rect x="1" y="1" width="5" height="4.6" rx=".8"/><rect x="1" y="8.6" width="5" height="4.6" rx=".8"/><rect x="8.5" y="2.2" width="7" height="2.3" rx="1"/><rect x="8.5" y="9.8" width="7" height="2.3" rx="1"/></g></svg>
<div style="left:883px;top:121px;width:1px;height:24px;background:#cfcfcf;"></div>
<div style="left:887.3px;top:120.5px;width:115px;height:24.5px;background:#fff;border:1px solid #bdbdbd;"></div>
<div class="t" style="left:895px;top:121px;height:24px;line-height:24px;font-size:12px;letter-spacing:0.096px;">Toutes les ressou</div>
<svg style="left:994.5px;top:131.5px;" width="5.5" height="3.2" viewBox="0 0 5.5 3.2"><path d="M0 0h5.5L2.75 3.2z" fill="#000"/></svg>
<div style="left:1006.7px;top:121px;width:1px;height:24px;background:#cfcfcf;"></div>
<svg style="left:1015px;top:131.5px;" width="5.5" height="3.2" viewBox="0 0 5.5 3.2"><path d="M0 0h5.5L2.75 3.2z" fill="#000"/></svg>
<div style="left:1024.5px;top:120.5px;width:341.5px;height:25px;background:#fff;border:1px solid #bdbdbd;"></div>
<div class="t" style="left:1031px;top:121px;height:24px;line-height:24px;font-size:12px;letter-spacing:-0.002px;color:#7a7a7a;">Rechercher</div>
<svg style="left:1346px;top:125px;" width="16" height="16" viewBox="0 0 16 16"><circle cx="10" cy="6" r="4.6" fill="none" stroke="#666" stroke-width="1.2"/><path d="M6.8 9.2 L1.5 14.5" stroke="#666" stroke-width="1.4"/></svg>
<div style="left:1371px;top:121px;width:1px;height:24px;background:#cfcfcf;"></div>
<svg style="left:1382px;top:123.5px;" width="17" height="19" viewBox="0 0 17 19"><rect x=".5" y=".5" width="16" height="18" fill="#fff" stroke="#999"/><path d="M2.5 4.5 H14.5 M2.5 9.5 H14.5 M2.5 14.5 H14.5" stroke="#777" stroke-width="1"/><rect x="2.5" y="5" width="12" height="4" fill="#e6e6e6"/></svg>
<div style="left:1412px;top:121px;width:1px;height:24px;background:#cfcfcf;"></div>
<div style="left:1416px;top:120.5px;width:33px;height:25px;background:#cce4f7;border:1px solid #2f8fd6;"></div>
<div style="left:1448.5px;top:120.5px;width:33px;height:25px;background:#cce4f7;border:1px solid #2f8fd6;"></div>
<svg style="left:1424px;top:125px;" width="17" height="15" viewBox="0 0 17 15"><rect x=".7" y=".7" width="15.6" height="13.6" fill="#f4f4f4" stroke="#555" stroke-width="1.2"/><rect x="2" y="3" width="4" height="10" fill="#aaa"/><path d="M7.5 4H14M9 7H14M9 10H14" stroke="#555" stroke-width="1.1"/></svg>
<svg style="left:1456.5px;top:125px;" width="17" height="15" viewBox="0 0 17 15"><rect x=".7" y=".7" width="15.6" height="13.6" fill="#f4f4f4" stroke="#555" stroke-width="1.2"/><rect x="11" y="3" width="4" height="10" fill="#aaa"/><path d="M3 4H9.5M3 7H8M3 10H8" stroke="#555" stroke-width="1.1"/></svg>
<div style="left:396px;top:147px;width:302.5px;height:156.5px;background:#fff;border:1px solid #a9a9a9;"></div>
<div style="left:398px;top:149.5px;width:281px;height:16.5px;background:#efefef;"></div>
<svg style="left:403.5px;top:155px;" width="9" height="6" viewBox="0 0 9 6"><path d="M.8 .8 L4.5 4.6 L8.2 .8" fill="none" stroke="#333" stroke-width="1.4"/></svg>
<svg style="left:420.9px;top:150.9px;" width="13.2" height="13.2" viewBox="0 0 13.2 13.2"><circle cx="6.6" cy="6.6" r="5.6" fill="#fff" stroke="#222" stroke-width="1.1"/><path d="M3.9999999999999996 4.199999999999999 L6.6 9.6 L9.2 4.199999999999999" fill="none" stroke="#222" stroke-width="1.3"/></svg>
<div class="t" style="left:441px;top:148.5px;height:18px;line-height:18px;font-size:12px;letter-spacing:-0.293px;font-weight:bold;">Fichiers ouverts</div>
<svg style="left:440px;top:167px;" width="15" height="17" viewBox="0 0 15 17"><path d="M.5 .5 H10.5 L14.5 4.5 V16.5 H.5 Z" fill="#5a5a5a" stroke="#3a3a3a"/><circle cx="7.5" cy="10" r="4.3" fill="#6a6a6a" stroke="#d8d8d8" stroke-width="1.1"/><path d="M5.8 8.3 L7.5 12 L9.2 8.3" fill="none" stroke="#e8e8e8" stroke-width="1.1"/></svg>
<div class="t" style="left:460px;top:166.5px;height:18px;line-height:18px;font-size:12px;letter-spacing:-0.502px;">Sans Titre 1</div>
<svg style="left:423px;top:191px;" width="9" height="6" viewBox="0 0 9 6"><path d="M.8 .8 L4.5 4.6 L8.2 .8" fill="none" stroke="#333" stroke-width="1.4"/></svg>
<svg style="left:440px;top:185px;" width="15" height="17" viewBox="0 0 15 17"><path d="M.5 .5 H10.5 L14.5 4.5 V16.5 H.5 Z" fill="#5a5a5a" stroke="#3a3a3a"/><circle cx="7.5" cy="10" r="4.3" fill="#6a6a6a" stroke="#d8d8d8" stroke-width="1.1"/><path d="M5.8 8.3 L7.5 12 L9.2 8.3" fill="none" stroke="#e8e8e8" stroke-width="1.1"/></svg>
<div style="left:460px;top:184.5px;width:220px;height:18px;overflow:hidden;"><div class="t" style="left:0px;top:0px;height:18px;line-height:18px;font-size:12px;letter-spacing:-0.237px;font-weight:bold;">Test Plugin Menuiseries Extérieures 05 Simplifié</div>
</div>
<svg style="left:457.5px;top:204px;" width="17" height="15" viewBox="0 0 17 15"><path d="M.6 2.5 Q.6 1 2 1 H6.5 L8 2.8 H15 Q16.4 2.8 16.4 4.2 V13 Q16.4 14.4 15 14.4 H2 Q.6 14.4 .6 13 Z" fill="#e9e5d3" stroke="#6e6a5c" stroke-width="1"/><path d="M1.5 4.6 H15.6" stroke="#f8f6ec" stroke-width="1.2"/><path d="M1.5 12.2 H15.6 M1.5 13.3 H15.6" stroke="#cdc7b0" stroke-width="1"/></svg>
<div class="t" style="left:479px;top:202.5px;height:18px;line-height:18px;font-size:12px;letter-spacing:-0.169px;">00-Styles de mur</div>
<svg style="left:443.5px;top:226.5px;" width="6" height="9" viewBox="0 0 6 9"><path d="M.8 .8 L4.6 4.5 L.8 8.2" fill="none" stroke="#9a9a9a" stroke-width="1.3"/></svg>
<svg style="left:457.5px;top:222px;" width="17" height="15" viewBox="0 0 17 15"><path d="M.6 2.5 Q.6 1 2 1 H6.5 L8 2.8 H15 Q16.4 2.8 16.4 4.2 V13 Q16.4 14.4 15 14.4 H2 Q.6 14.4 .6 13 Z" fill="#e9e5d3" stroke="#6e6a5c" stroke-width="1"/><path d="M1.5 4.6 H15.6" stroke="#f8f6ec" stroke-width="1.2"/><path d="M1.5 12.2 H15.6 M1.5 13.3 H15.6" stroke="#cdc7b0" stroke-width="1"/></svg>
<div class="t" style="left:479px;top:220.5px;height:18px;line-height:18px;font-size:12px;letter-spacing:-0.233px;">10-Menuiseries Extérieures</div>
<svg style="left:457.5px;top:240px;" width="17" height="15" viewBox="0 0 17 15"><path d="M.6 2.5 Q.6 1 2 1 H6.5 L8 2.8 H15 Q16.4 2.8 16.4 4.2 V13 Q16.4 14.4 15 14.4 H2 Q.6 14.4 .6 13 Z" fill="#e9e5d3" stroke="#6e6a5c" stroke-width="1"/><path d="M1.5 4.6 H15.6" stroke="#f8f6ec" stroke-width="1.2"/><path d="M1.5 12.2 H15.6 M1.5 13.3 H15.6" stroke="#cdc7b0" stroke-width="1"/></svg>
<div class="t" style="left:479px;top:238.5px;height:18px;line-height:18px;font-size:12px;letter-spacing:-0.319px;">99-Base de données</div>
<div style="left:398px;top:256.5px;width:281.5px;height:18px;background:#d9d9d9;"></div>
<svg style="left:457.5px;top:258px;" width="17" height="15" viewBox="0 0 17 15"><path d="M.6 2.5 Q.6 1 2 1 H6.5 L8 2.8 H15 Q16.4 2.8 16.4 4.2 V13 Q16.4 14.4 15 14.4 H2 Q.6 14.4 .6 13 Z" fill="#e9e5d3" stroke="#6e6a5c" stroke-width="1"/><path d="M1.5 4.6 H15.6" stroke="#f8f6ec" stroke-width="1.2"/><path d="M1.5 12.2 H15.6 M1.5 13.3 H15.6" stroke="#cdc7b0" stroke-width="1"/></svg>
<div class="t" style="left:479px;top:256.5px;height:18px;line-height:18px;font-size:12px;letter-spacing:-0.178px;">102-Script divers</div>
<div style="left:398px;top:274.5px;width:282px;height:10px;overflow:hidden;"><svg style="left:45.5px;top:6px;" width="6" height="9" viewBox="0 0 6 9"><path d="M.8 .8 L4.6 4.5 L.8 8.2" fill="none" stroke="#aaa" stroke-width="1.3"/></svg>
<svg style="left:59.5px;top:1.5px;" width="17" height="15" viewBox="0 0 17 15"><path d="M.6 2.5 Q.6 1 2 1 H6.5 L8 2.8 H15 Q16.4 2.8 16.4 4.2 V13 Q16.4 14.4 15 14.4 H2 Q.6 14.4 .6 13 Z" fill="#e9e5d3" stroke="#6e6a5c" stroke-width="1"/><path d="M1.5 4.6 H15.6" stroke="#f8f6ec" stroke-width="1.2"/><path d="M1.5 12.2 H15.6 M1.5 13.3 H15.6" stroke="#cdc7b0" stroke-width="1"/></svg>
<div class="t" style="left:81px;top:0px;height:18px;line-height:18px;font-size:12px;letter-spacing:-0.133px;">Ne pas utiliser ou supprimer - Men Ext</div>
</div>
<div style="left:680px;top:148px;width:17.5px;height:136.5px;background:#f0f0f0;"></div>
<div style="left:681px;top:166px;width:15.5px;height:22px;background:#cdcdcd;"></div>
<svg style="left:684px;top:154px;" width="9" height="6" viewBox="0 0 9 6"><path d="M.8 5 L4.5 1.2 L8.2 5" fill="none" stroke="#555" stroke-width="1.3"/></svg>
<svg style="left:684px;top:273px;" width="9" height="6" viewBox="0 0 9 6"><path d="M.8 1 L4.5 4.8 L8.2 1" fill="none" stroke="#555" stroke-width="1.3"/></svg>
<div style="left:397px;top:284.5px;width:300.5px;height:18px;background:#f0f0f0;"></div>
<div style="left:415px;top:285.5px;width:97px;height:16px;background:#cdcdcd;"></div>
<svg style="left:403px;top:289px;" width="6" height="9" viewBox="0 0 6 9"><path d="M5 .8 L1.2 4.5 L5 8.2" fill="none" stroke="#555" stroke-width="1.3"/></svg>
<svg style="left:668px;top:289px;" width="6" height="9" viewBox="0 0 6 9"><path d="M1 .8 L4.8 4.5 L1 8.2" fill="none" stroke="#555" stroke-width="1.3"/></svg>
<div style="left:405px;top:305px;width:112.5px;height:25px;background:#fdfdfd;border:1px solid #b5c2d0;"></div>
<div class="t" style="left:409px;top:306px;height:23px;line-height:23px;font-size:11px;letter-spacing:-0.269px;">Créer une ressource...</div>
<div style="left:526px;top:305px;width:93.5px;height:25px;background:#fdfdfd;border:1px solid #b5c2d0;"></div>
<div class="t" style="left:529.5px;top:306px;height:23px;line-height:23px;font-size:11px;letter-spacing:-0.283px;">Créer un dossier...</div>
<div style="left:702px;top:147px;width:539.5px;height:156.5px;background:#fff;border:1px solid #a9a9a9;"></div>
<svg style="left:704.5px;top:149.5px;" width="17" height="15" viewBox="0 0 17 15"><path d="M.6 2.5 Q.6 1 2 1 H6.5 L8 2.8 H15 Q16.4 2.8 16.4 4.2 V13 Q16.4 14.4 15 14.4 H2 Q.6 14.4 .6 13 Z" fill="#e9e5d3" stroke="#6e6a5c" stroke-width="1"/><path d="M1.5 4.6 H15.6" stroke="#f8f6ec" stroke-width="1.2"/><path d="M1.5 12.2 H15.6 M1.5 13.3 H15.6" stroke="#cdc7b0" stroke-width="1"/></svg>
<div class="t" style="left:726px;top:148px;height:17px;line-height:17px;font-size:12px;font-weight:bold;">«</div>
<div class="t" style="left:744px;top:148.5px;height:17px;line-height:17px;font-size:11px;letter-spacing:-0.266px;">102-Script divers</div>
<div style="left:704px;top:165px;width:532.5px;height:1px;background:#9a9a9a;"></div>
<div style="left:704px;top:166px;width:123.5px;height:86px;background:#cce4f7;"></div>
<svg style="left:742.7px;top:168px;" width="46" height="64" viewBox="0 0 46 64"><defs><linearGradient id="sga" x1="1" y1="0" x2="0" y2="1"><stop offset="0" stop-color="#ececec"/><stop offset=".5" stop-color="#cfcfcf"/><stop offset="1" stop-color="#a4a4a4"/></linearGradient><linearGradient id="sgaT" x1="0" y1="0" x2="1" y2="1"><stop offset="0" stop-color="#d6d6d6"/><stop offset=".5" stop-color="#f2f2f2"/><stop offset="1" stop-color="#dedede"/></linearGradient></defs><path d="M30 1.5 C38 1.2 45 7 44.6 12 C44.5 13.5 44 14.8 43 15.6 L34.5 23 L42 31.5 C44 34 44.8 36.5 44.6 39 C44.4 41.5 43.5 43.5 42 45 L24.5 58.8 C21.5 61.2 19 62.8 15.5 62.6 C9 62.3 1.2 57 1.4 51 C1.5 49.5 2 48.5 3 47.8 L11.9 41.1 L3.6 32 C1.8 30 1.2 27 1.4 24 C1.6 21.5 2.6 19.5 4.5 18 L24 2.8 C26 1.7 28 1.5 30 1.5 Z" fill="url(#sga)"/><path d="M6.5 18.6 L24 2.8 C26 1.7 28 1.5 30 1.5 C38 1.2 45 7 44.6 12 C44.5 13.5 44 14.8 43 15.6 L24.2 30.3 C22.5 22 14 17.6 6.5 18.6 Z" fill="url(#sgaT)"/><path d="M12.2 41.5 C17 45.5 24 52 24.2 56 C24.3 57.5 24 58.5 23.3 59.4 L42 45 C43.5 43.5 44.4 41.5 44.6 39 C44.8 36.5 44 34 42 31.5 L34.5 23 L24.2 30.3 Z" fill="#000" fill-opacity=".0"/><path d="M6.5 18.6 C14 17.6 22.5 22 24.2 30.3 L33.8 23.3" fill="none" stroke="#707070" stroke-width="1.1"/><path d="M12.5 41.8 C17 45.5 24 52 24.2 56 C24.3 57.5 24 58.5 23.3 59.2" fill="none" stroke="#707070" stroke-width="1.1"/><path d="M30 1.5 C38 1.2 45 7 44.6 12 C44.5 13.5 44 14.8 43 15.6 L34.5 23 L42 31.5 C44 34 44.8 36.5 44.6 39 C44.4 41.5 43.5 43.5 42 45 L24.5 58.8 C21.5 61.2 19 62.8 15.5 62.6 C9 62.3 1.2 57 1.4 51 C1.5 49.5 2 48.5 3 47.8 L11.9 41.1 L3.6 32 C1.8 30 1.2 27 1.4 24 C1.6 21.5 2.6 19.5 4.5 18 L24 2.8 C26 1.7 28 1.5 30 1.5 Z" fill="none" stroke="#0a0a0a" stroke-width="2.7" stroke-linejoin="round"/></svg>
<svg style="left:867.7px;top:168px;" width="46" height="64" viewBox="0 0 46 64"><defs><linearGradient id="sgb" x1="1" y1="0" x2="0" y2="1"><stop offset="0" stop-color="#ececec"/><stop offset=".5" stop-color="#cfcfcf"/><stop offset="1" stop-color="#a4a4a4"/></linearGradient><linearGradient id="sgbT" x1="0" y1="0" x2="1" y2="1"><stop offset="0" stop-color="#d6d6d6"/><stop offset=".5" stop-color="#f2f2f2"/><stop offset="1" stop-color="#dedede"/></linearGradient></defs><path d="M30 1.5 C38 1.2 45 7 44.6 12 C44.5 13.5 44 14.8 43 15.6 L34.5 23 L42 31.5 C44 34 44.8 36.5 44.6 39 C44.4 41.5 43.5 43.5 42 45 L24.5 58.8 C21.5 61.2 19 62.8 15.5 62.6 C9 62.3 1.2 57 1.4 51 C1.5 49.5 2 48.5 3 47.8 L11.9 41.1 L3.6 32 C1.8 30 1.2 27 1.4 24 C1.6 21.5 2.6 19.5 4.5 18 L24 2.8 C26 1.7 28 1.5 30 1.5 Z" fill="url(#sgb)"/><path d="M6.5 18.6 L24 2.8 C26 1.7 28 1.5 30 1.5 C38 1.2 45 7 44.6 12 C44.5 13.5 44 14.8 43 15.6 L24.2 30.3 C22.5 22 14 17.6 6.5 18.6 Z" fill="url(#sgbT)"/><path d="M12.2 41.5 C17 45.5 24 52 24.2 56 C24.3 57.5 24 58.5 23.3 59.4 L42 45 C43.5 43.5 44.4 41.5 44.6 39 C44.8 36.5 44 34 42 31.5 L34.5 23 L24.2 30.3 Z" fill="#000" fill-opacity=".0"/><path d="M6.5 18.6 C14 17.6 22.5 22 24.2 30.3 L33.8 23.3" fill="none" stroke="#707070" stroke-width="1.1"/><path d="M12.5 41.8 C17 45.5 24 52 24.2 56 C24.3 57.5 24 58.5 23.3 59.2" fill="none" stroke="#707070" stroke-width="1.1"/><path d="M30 1.5 C38 1.2 45 7 44.6 12 C44.5 13.5 44 14.8 43 15.6 L34.5 23 L42 31.5 C44 34 44.8 36.5 44.6 39 C44.4 41.5 43.5 43.5 42 45 L24.5 58.8 C21.5 61.2 19 62.8 15.5 62.6 C9 62.3 1.2 57 1.4 51 C1.5 49.5 2 48.5 3 47.8 L11.9 41.1 L3.6 32 C1.8 30 1.2 27 1.4 24 C1.6 21.5 2.6 19.5 4.5 18 L24 2.8 C26 1.7 28 1.5 30 1.5 Z" fill="none" stroke="#0a0a0a" stroke-width="2.7" stroke-linejoin="round"/></svg>
<svg style="left:992px;top:168px;" width="46" height="64" viewBox="0 0 46 64"><defs><linearGradient id="sgc" x1="1" y1="0" x2="0" y2="1"><stop offset="0" stop-color="#ececec"/><stop offset=".5" stop-color="#cfcfcf"/><stop offset="1" stop-color="#a4a4a4"/></linearGradient><linearGradient id="sgcT" x1="0" y1="0" x2="1" y2="1"><stop offset="0" stop-color="#d6d6d6"/><stop offset=".5" stop-color="#f2f2f2"/><stop offset="1" stop-color="#dedede"/></linearGradient></defs><path d="M30 1.5 C38 1.2 45 7 44.6 12 C44.5 13.5 44 14.8 43 15.6 L34.5 23 L42 31.5 C44 34 44.8 36.5 44.6 39 C44.4 41.5 43.5 43.5 42 45 L24.5 58.8 C21.5 61.2 19 62.8 15.5 62.6 C9 62.3 1.2 57 1.4 51 C1.5 49.5 2 48.5 3 47.8 L11.9 41.1 L3.6 32 C1.8 30 1.2 27 1.4 24 C1.6 21.5 2.6 19.5 4.5 18 L24 2.8 C26 1.7 28 1.5 30 1.5 Z" fill="url(#sgc)"/><path d="M6.5 18.6 L24 2.8 C26 1.7 28 1.5 30 1.5 C38 1.2 45 7 44.6 12 C44.5 13.5 44 14.8 43 15.6 L24.2 30.3 C22.5 22 14 17.6 6.5 18.6 Z" fill="url(#sgcT)"/><path d="M12.2 41.5 C17 45.5 24 52 24.2 56 C24.3 57.5 24 58.5 23.3 59.4 L42 45 C43.5 43.5 44.4 41.5 44.6 39 C44.8 36.5 44 34 42 31.5 L34.5 23 L24.2 30.3 Z" fill="#000" fill-opacity=".0"/><path d="M6.5 18.6 C14 17.6 22.5 22 24.2 30.3 L33.8 23.3" fill="none" stroke="#707070" stroke-width="1.1"/><path d="M12.5 41.8 C17 45.5 24 52 24.2 56 C24.3 57.5 24 58.5 23.3 59.2" fill="none" stroke="#707070" stroke-width="1.1"/><path d="M30 1.5 C38 1.2 45 7 44.6 12 C44.5 13.5 44 14.8 43 15.6 L34.5 23 L42 31.5 C44 34 44.8 36.5 44.6 39 C44.4 41.5 43.5 43.5 42 45 L24.5 58.8 C21.5 61.2 19 62.8 15.5 62.6 C9 62.3 1.2 57 1.4 51 C1.5 49.5 2 48.5 3 47.8 L11.9 41.1 L3.6 32 C1.8 30 1.2 27 1.4 24 C1.6 21.5 2.6 19.5 4.5 18 L24 2.8 C26 1.7 28 1.5 30 1.5 Z" fill="none" stroke="#0a0a0a" stroke-width="2.7" stroke-linejoin="round"/></svg>
<div class="t" style="left:717px;top:233.5px;height:18px;line-height:18px;font-size:12px;letter-spacing:-0.372px;">ClearWSCellBefore</div>
<div class="t" style="left:832.3px;top:233.5px;height:18px;line-height:18px;font-size:12px;letter-spacing:-0.367px;">GetWSSubrowCellStr...</div>
<div class="t" style="left:843.3px;top:248.5px;height:18px;line-height:18px;font-size:12px;letter-spacing:-0.333px;">Or_InRunScript-V2</div>
<div class="t" style="left:982.7px;top:233.5px;height:18px;line-height:18px;font-size:12px;letter-spacing:-0.426px;">Return UUID</div>
<div style="left:704px;top:287px;width:532.5px;height:1px;background:#9a9a9a;"></div>
<div class="t" style="left:1189.5px;top:286px;height:17px;line-height:17px;font-size:11px;letter-spacing:-0.480px;">3 éléments</div>
<div style="left:1245px;top:148px;width:237.5px;height:150px;background:#fff;border:1px solid #c4c4c4;"></div>
<div style="left:1245px;top:302px;width:237.5px;height:1px;background:#c4c4c4;"></div>
<div class="t" style="left:1247.5px;top:147.5px;height:17px;line-height:17px;font-size:11px;letter-spacing:0.322px;font-weight:bold;">Nom: ClearWSCellBefore</div>
<div class="t" style="left:1247.5px;top:164px;height:17px;line-height:17px;font-size:11px;letter-spacing:-0.256px;">Type: Script</div>
<svg style="left:1340px;top:192.5px;" width="46" height="64" viewBox="0 0 46 64"><defs><linearGradient id="sgd" x1="1" y1="0" x2="0" y2="1"><stop offset="0" stop-color="#ececec"/><stop offset=".5" stop-color="#cfcfcf"/><stop offset="1" stop-color="#a4a4a4"/></linearGradient><linearGradient id="sgdT" x1="0" y1="0" x2="1" y2="1"><stop offset="0" stop-color="#d6d6d6"/><stop offset=".5" stop-color="#f2f2f2"/><stop offset="1" stop-color="#dedede"/></linearGradient></defs><path d="M30 1.5 C38 1.2 45 7 44.6 12 C44.5 13.5 44 14.8 43 15.6 L34.5 23 L42 31.5 C44 34 44.8 36.5 44.6 39 C44.4 41.5 43.5 43.5 42 45 L24.5 58.8 C21.5 61.2 19 62.8 15.5 62.6 C9 62.3 1.2 57 1.4 51 C1.5 49.5 2 48.5 3 47.8 L11.9 41.1 L3.6 32 C1.8 30 1.2 27 1.4 24 C1.6 21.5 2.6 19.5 4.5 18 L24 2.8 C26 1.7 28 1.5 30 1.5 Z" fill="url(#sgd)"/><path d="M6.5 18.6 L24 2.8 C26 1.7 28 1.5 30 1.5 C38 1.2 45 7 44.6 12 C44.5 13.5 44 14.8 43 15.6 L24.2 30.3 C22.5 22 14 17.6 6.5 18.6 Z" fill="url(#sgdT)"/><path d="M12.2 41.5 C17 45.5 24 52 24.2 56 C24.3 57.5 24 58.5 23.3 59.4 L42 45 C43.5 43.5 44.4 41.5 44.6 39 C44.8 36.5 44 34 42 31.5 L34.5 23 L24.2 30.3 Z" fill="#000" fill-opacity=".0"/><path d="M6.5 18.6 C14 17.6 22.5 22 24.2 30.3 L33.8 23.3" fill="none" stroke="#707070" stroke-width="1.1"/><path d="M12.5 41.8 C17 45.5 24 52 24.2 56 C24.3 57.5 24 58.5 23.3 59.2" fill="none" stroke="#707070" stroke-width="1.1"/><path d="M30 1.5 C38 1.2 45 7 44.6 12 C44.5 13.5 44 14.8 43 15.6 L34.5 23 L42 31.5 C44 34 44.8 36.5 44.6 39 C44.4 41.5 43.5 43.5 42 45 L24.5 58.8 C21.5 61.2 19 62.8 15.5 62.6 C9 62.3 1.2 57 1.4 51 C1.5 49.5 2 48.5 3 47.8 L11.9 41.1 L3.6 32 C1.8 30 1.2 27 1.4 24 C1.6 21.5 2.6 19.5 4.5 18 L24 2.8 C26 1.7 28 1.5 30 1.5 Z" fill="none" stroke="#0a0a0a" stroke-width="2.7" stroke-linejoin="round"/></svg>
<div style="left:1247.5px;top:269.5px;width:232px;height:26px;background:#9db9db;"></div>
<div style="left:1291.5px;top:270px;width:1px;height:25px;background:#b9cde6;"></div>
<div style="left:1338.5px;top:270px;width:1px;height:25px;background:#b9cde6;"></div>
<svg style="left:1258px;top:273px;" width="22" height="20" viewBox="0 0 22 20"><path d="M2 10 L10 3 L19 8 V17 L9 19 L2 16 Z M9 19 V11 L2 10 M9 11 L19 8" fill="#a9c2e0" stroke="#8aa8cc" stroke-width="1.1"/></svg>
<svg style="left:1303px;top:273px;" width="22" height="20" viewBox="0 0 22 20"><path d="M3 8 L10 2 L19 7 V16 L10 19 L3 16 Z M10 2 V19" fill="#a9c2e0" stroke="#8aa8cc" stroke-width="1.1"/></svg>
<svg style="left:1351px;top:273px;" width="24" height="20" viewBox="0 0 24 20"><path d="M3 9 C3 6 5 6 6 7 C8 5 14 5 16 7 L21 5 L18 10 C18 15 15 17 11 17 C7 17 5 14 5 11 C3.5 11 3 10 3 9 Z" fill="#a9c2e0" stroke="#8aa8cc" stroke-width="1.1"/><ellipse cx="11" cy="5" rx="3" ry="1.6" fill="#a9c2e0" stroke="#8aa8cc"/></svg>

<!-- p_info -->
<div style="left:1509.5px;top:52.5px;width:410px;height:18px;background:#f0f0f0;border:1px solid #a5a5a5;border-radius:2px;"></div>
<div class="t" style="left:1513px;top:52.7px;height:19px;line-height:19px;font-size:13px;letter-spacing:0.029px;">Info Objet - Objet</div>
<svg style="left:1868px;top:57px;" width="10" height="9" viewBox="0 0 10 9"><path d="M0 1h9M0 4h9M0 7h9" stroke="#111" stroke-width="1.4"/></svg>
<div class="t" style="left:1888px;top:55.5px;height:13px;line-height:13px;font-size:11px;font-weight:bold;">?</div>
<svg style="left:1905px;top:58px;" width="9" height="9" viewBox="0 0 9 9"><path d="M1 1l6.5 6.5M7.5 1L1 7.5" stroke="#111" stroke-width="1.7"/></svg>
<div style="left:1509.5px;top:74px;width:408px;height:24px;background:#f7f7f7;"></div>
<div class="t" style="left:1517.5px;top:75px;height:22px;line-height:22px;font-size:12px;letter-spacing:0.264px;">Objet</div>
<div style="left:1554px;top:76px;width:1.5px;height:21px;background:#222;"></div>
<div class="t" style="left:1562px;top:75px;height:22px;line-height:22px;font-size:12px;letter-spacing:0.522px;">Texture</div>
<div style="left:1611px;top:78px;width:1px;height:15px;background:#c0c0c0;"></div>
<div class="t" style="left:1618px;top:75px;height:22px;line-height:22px;font-size:12px;letter-spacing:0.067px;">Données</div>
<div style="left:1672.5px;top:78px;width:1px;height:15px;background:#c0c0c0;"></div>
<div style="left:1509px;top:97px;width:1px;height:916px;background:#ababab;"></div>
<div style="left:1510px;top:97px;width:2px;height:916px;background:#fbfbfb;"></div>
<div style="left:1509px;top:1013px;width:408px;height:1px;background:#a6a6a6;"></div>
<div style="left:1512px;top:102px;width:405px;height:20px;background:#f1f1f1;border:1px solid #6c6c6c;"></div>
<div class="t" style="left:1516.5px;top:103.9px;height:18px;line-height:18px;font-size:12.5px;letter-spacing:0.020px;font-weight:bold;">Tableau placé</div>
<div style="left:1512px;top:126px;width:404px;height:863px;border:1px solid #fff;border-top-color:#727272;border-left-color:#727272;"></div>
<div style="left:1513px;top:127px;width:1px;height:861px;background:#fbfbfb;"></div>
<div class="t" style="left:1517.5px;top:127px;height:20px;line-height:20px;font-size:11px;letter-spacing:-0.811px;">Classe:</div>
<div style="left:1557px;top:129px;width:357.5px;height:16.5px;background:#fff;border:1px solid #c3c3c3;"></div>
<div class="t" style="left:1560px;top:127px;height:20px;line-height:20px;font-size:11px;letter-spacing:-0.304px;">Général</div>
<div style="left:1895px;top:130px;width:18.5px;height:14.5px;background:#f3f3f3;"></div>
<svg style="left:1901.5px;top:135.5px;" width="6" height="3.5" viewBox="0 0 6 3.5"><path d="M0 0h6L3.0 3.5z" fill="#000"/></svg>
<div class="t" style="left:1517.5px;top:146px;height:20px;line-height:20px;font-size:11px;letter-spacing:-0.559px;">Calque:</div>
<div style="left:1559px;top:148px;width:355.5px;height:16.5px;background:#fff;border:1px solid #c3c3c3;"></div>
<div class="t" style="left:1562px;top:146px;height:20px;line-height:20px;font-size:11px;letter-spacing:-0.437px;">Dessin</div>
<div style="left:1895px;top:149px;width:18.5px;height:14.5px;background:#f3f3f3;"></div>
<svg style="left:1901.5px;top:154.5px;" width="6" height="3.5" viewBox="0 0 6 3.5"><path d="M0 0h6L3.0 3.5z" fill="#000"/></svg>
<div class="t" style="left:1517.5px;top:165px;height:20px;line-height:20px;font-size:11px;letter-spacing:-0.414px;">Plan:</div>
<div style="left:1588px;top:167px;width:326.5px;height:16.5px;background:#fff;border:1px solid #c3c3c3;"></div>
<div class="t" style="left:1591px;top:165px;height:20px;line-height:20px;font-size:11px;letter-spacing:-0.135px;">de l'écran</div>
<div style="left:1895px;top:168px;width:18.5px;height:14.5px;background:#f3f3f3;"></div>
<svg style="left:1901.5px;top:173.5px;" width="6" height="3.5" viewBox="0 0 6 3.5"><path d="M0 0h6L3.0 3.5z" fill="#000"/></svg>
<div class="t" style="left:1518px;top:184px;height:20px;line-height:20px;font-size:11px;letter-spacing:-0.201px;">Source:</div>
<div class="t" style="left:1592.5px;top:184px;height:20px;line-height:20px;font-size:11px;letter-spacing:-0.044px;">Tableau-TW 14 PP 60_V2</div>
<div class="t" style="left:1518px;top:203px;height:20px;line-height:20px;font-size:11px;letter-spacing:-0.257px;">Multiplicateur:</div>
<div style="left:1588px;top:204.5px;width:326.5px;height:16px;background:#fff;border:1px solid #b9b9b9;"></div>
<div class="t" style="left:1592.5px;top:203px;height:20px;line-height:20px;font-size:11px;letter-spacing:-1.117px;">1</div>
<div style="left:1516px;top:225.5px;width:13px;height:13px;background:#fff;border:1px solid #333;"></div>
<svg style="left:1517px;top:227px;" width="11" height="10" viewBox="0 0 11 10"><path d="M1.5 5 L4.2 8 L9.5 1.5" fill="none" stroke="#111" stroke-width="1.3"/></svg>
<div class="t" style="left:1535px;top:222px;height:20px;line-height:20px;font-size:11px;letter-spacing:-0.189px;">Afficher les en-têtes de bases de données</div>
<div style="left:1515px;top:242.5px;width:399.5px;height:16.5px;background:#e1e1e1;border:1px solid #adadad;"></div>
<div class="t" style="left:1689px;top:241px;height:20px;line-height:20px;font-size:11px;letter-spacing:-0.096px;">Recalculer</div>
<div class="t" style="left:1516.5px;top:992px;height:20px;line-height:20px;font-size:11px;letter-spacing:-0.570px;">Nom:</div>
<div style="left:1545px;top:994px;width:372px;height:17px;background:#fff;border:1px solid #5a5a5a;"></div>

<!-- p_status -->
<div style="left:0px;top:1014px;width:1917px;height:26px;background:#f0f0f0;"></div>
<div class="t" style="left:4px;top:1019px;height:20px;line-height:20px;font-size:12px;letter-spacing:0.110px;">Appuyez sur la touche F1 ou cliquez sur l'icône ? pour consulter l'aide.</div>
<div class="t" style="left:1512px;top:1019px;height:20px;line-height:20px;font-size:12px;letter-spacing:-0.169px;">X:</div>
<div class="t" style="left:1531px;top:1019px;height:20px;line-height:20px;font-size:12px;letter-spacing:0.505px;letter-spacing:.4px;">11040</div>
<div style="left:1630px;top:1016px;width:23.5px;height:24px;background:#f4f4f4;border:1px solid #d2d2d2;"></div>
<svg style="left:1630px;top:1016px;" width="24" height="24" viewBox="0 0 24 24"><path d="M5 6.5h5M7.5 4v5M13.5 6.5h5M16 4v5M5 16h5M7.5 13.5v5M13 16h4M15 14v4" stroke="#111" stroke-width="1.1"/><path d="M20 16.5v4h-4z" fill="#fff" stroke="#111" stroke-width=".8"/></svg>
<div style="left:1655.5px;top:1016px;width:23.5px;height:24px;background:#cce4f7;border:1px solid #b9d3ea;"></div>
<svg style="left:1655.5px;top:1016px;" width="24" height="24" viewBox="0 0 24 24"><rect x="5.5" y="5.5" width="12" height="12" fill="none" stroke="#111" stroke-width="1.3"/><path d="M3 7h5M3 16h5M15 7h5M7 3v5M16 3v5M7 15v5M16 15v4" stroke="#111" stroke-width="1.1"/><path d="M21 17.5v4h-4z" fill="#fff" stroke="#111" stroke-width=".8"/></svg>
<div style="left:1681.5px;top:1016px;width:23.5px;height:24px;background:#cce4f7;border:1px solid #b9d3ea;"></div>
<svg style="left:1681.5px;top:1016px;" width="24" height="24" viewBox="0 0 24 24"><path d="M6 3 V18 H21 M6 18 L17 6 M6 7 L17 18" fill="none" stroke="#111" stroke-width="1.2"/><path d="M21 17.5v4h-4z" fill="#fff" stroke="#111" stroke-width=".8"/></svg>
<div style="left:1707.5px;top:1016px;width:23.5px;height:24px;background:#cce4f7;border:1px solid #b9d3ea;"></div>
<svg style="left:1707.5px;top:1016px;" width="24" height="24" viewBox="0 0 24 24"><path d="M5 5 L19 19 M19 5 L5 19" stroke="#111" stroke-width="1.2"/><circle cx="12" cy="12" r="2.4" fill="#cce4f7"/></svg>
<div style="left:1733.5px;top:1016px;width:23.5px;height:24px;background:#cce4f7;border:1px solid #b9d3ea;"></div>
<svg style="left:1733.5px;top:1016px;" width="24" height="24" viewBox="0 0 24 24"><rect x="4" y="4" width="4" height="4" fill="#fff" stroke="#111" stroke-width="1.1"/><path d="M10 6 H19 M6 10 V19" stroke="#111" stroke-width="1.2" stroke-dasharray="2.5 2"/><path d="M21 17.5v4h-4z" fill="#fff" stroke="#111" stroke-width=".8"/></svg>
<div style="left:1759.5px;top:1016px;width:23.5px;height:24px;background:#cce4f7;border:1px solid #b9d3ea;"></div>
<svg style="left:1759.5px;top:1016px;" width="24" height="24" viewBox="0 0 24 24"><path d="M4 19 L10 13.5 M13.5 10.5 L20 4.5" stroke="#111" stroke-width="1.3"/><circle cx="11.8" cy="12" r="1.2" fill="#111"/><path d="M21 17.5v4h-4z" fill="#fff" stroke="#111" stroke-width=".8"/></svg>
<div style="left:1785.5px;top:1016px;width:23.5px;height:24px;background:#cce4f7;border:1px solid #b9d3ea;"></div>
<svg style="left:1785.5px;top:1016px;" width="24" height="24" viewBox="0 0 24 24"><path d="M4 19 L19 4" stroke="#111" stroke-width="1.3"/><path d="M10 12.5 L15.5 18 L19.5 14 L14 8.5" fill="none" stroke="#111" stroke-width="1.2"/><path d="M21 17.5v4h-4z" fill="#fff" stroke="#111" stroke-width=".8"/></svg>
<div style="left:1811px;top:1016px;width:23.5px;height:24px;background:#f4f4f4;border:1px solid #d2d2d2;"></div>
<svg style="left:1811px;top:1016px;" width="24" height="24" viewBox="0 0 24 24"><path d="M3 9 C9 5 16 9 19 17" fill="none" stroke="#111" stroke-width="1.2"/><path d="M15 3 L13 14 L7 20" fill="none" stroke="#111" stroke-width="1.2"/></svg>
<div style="left:1837px;top:1016px;width:23.5px;height:24px;background:#a0a0a0;border:1px solid #a0a0a0;"></div>
<svg style="left:1837px;top:1016px;" width="24" height="24" viewBox="0 0 24 24"><path d="M12 4 L21 12 L12 20 L3 12 Z M7.5 8 L16.5 16 M16.5 8 L7.5 16" fill="none" stroke="#111" stroke-width="1.2"/></svg>
<div style="left:1869.5px;top:1016px;width:23.5px;height:24px;background:#f4f4f4;border:1px solid #d2d2d2;"></div>
<div style="left:1877px;top:1022px;width:3.4px;height:12px;background:#000;"></div>
<div style="left:1883px;top:1022px;width:3.4px;height:12px;background:#000;"></div>
<div style="left:1896px;top:1016px;width:23px;height:24px;background:#f4f4f4;border:1px solid #d2d2d2;"></div>
<svg style="left:1899px;top:1021px;" width="14" height="14" viewBox="0 0 14 14"><circle cx="7" cy="7" r="4.2" fill="none" stroke="#111" stroke-width="3.2" stroke-dasharray="2.2 1.1"/><circle cx="7" cy="7" r="3.2" fill="none" stroke="#111" stroke-width="2"/></svg>

<!-- p_taskbar -->
<div style="left:0px;top:1040px;width:1917px;height:39px;background:linear-gradient(90deg,#26363f 0%,#25323b 55%,#1f2a33 100%);"></div>
<svg style="left:16px;top:1052px;" width="17" height="17" viewBox="0 0 17 17"><path d="M0 2.4 L7 1.4 V8 H0 Z M8 1.25 L16.5 0 V8 H8 Z M0 9 H7 V15.6 L0 14.6 Z M8 9 H16.5 V17 L8 15.75 Z" fill="#fff"/></svg>
<div style="left:48px;top:1040px;width:287px;height:39px;background:#f3f3f3;border-top:1px solid #dcdcdc;"></div>
<svg style="left:59px;top:1051px;" width="18" height="18" viewBox="0 0 18 18"><circle cx="10.6" cy="6.6" r="5" fill="none" stroke="#222" stroke-width="1.2"/><path d="M7 10.4 L1 16.5" stroke="#222" stroke-width="1.3"/></svg>
<div class="t" style="left:88px;top:1048px;height:24px;line-height:24px;font-size:15px;letter-spacing:-0.116px;color:#3a3a3a;">Taper ici pour rechercher</div>
<div style="left:260px;top:1044px;width:71px;height:33px;background:#e6e6e6;border-radius:6px;"></div>
<svg style="left:280px;top:1048px;" width="32" height="26" viewBox="0 0 32 26"><path d="M11 5 V3 Q11 1.5 12.5 1.5 H19.5 Q21 1.5 21 3 V5" fill="none" stroke="#5a3a10" stroke-width="1.8"/><rect x="1" y="5" width="30" height="20" rx="2.5" fill="#e6951c"/><path d="M1 7.5 Q1 5 3.5 5 H28.5 Q31 5 31 7.5 V13 H1 Z" fill="#c97812"/><rect x="1" y="18" width="30" height="7" rx="2" fill="#f2a62a"/><rect x="13.5" y="11" width="5" height="4.5" rx="1" fill="#fbe08a" stroke="#8a5a10" stroke-width=".6"/></svg>
<svg style="left:351px;top:1052px;" width="18" height="17" viewBox="0 0 18 17"><rect x="1" y="3.5" width="10" height="10" fill="none" stroke="#fff" stroke-width="1.2"/><path d="M1 .8 H11 M1 16.2 H11 M14.5 1 V3 M14.5 5.5 V11.5 M14.5 14 V16.5" stroke="#fff" stroke-width="1.4"/></svg>
<svg style="left:398px;top:1047px;" width="26" height="26" viewBox="0 0 26 26"><defs><linearGradient id="eg" x1="0" y1="0" x2="1" y2="1"><stop offset="0" stop-color="#35c1f1"/><stop offset=".5" stop-color="#1b9de2"/><stop offset="1" stop-color="#0c59a4"/></linearGradient><linearGradient id="eg2" x1="0" y1="0" x2="1" y2="0"><stop offset="0" stop-color="#1ea0e3"/><stop offset="1" stop-color="#6fdc58"/></linearGradient></defs><circle cx="13" cy="13" r="12.5" fill="url(#eg)"/><path d="M1 12 C2 4 9 .5 14 .5 C21 .5 25.5 6 25.5 11 C25.5 15 22 16.5 19 16.5 C16 16.5 15 15 16 13.5 C17 12 16 8.5 12 8.5 C7 8.5 2 12 1 15 Z" fill="url(#eg2)"/><path d="M8 13 C6 18 9 24 16 25 C11 26 4 23 2 17 C2 14 5 11 8 13 Z" fill="#0c4f96"/></svg>
<div style="left:435px;top:1040px;width:48.5px;height:39px;background:#43535c;"></div>
<div style="left:435px;top:1077px;width:48.5px;height:2px;background:#8cc5f2;"></div>
<svg style="left:447px;top:1047.5px;" width="25" height="25" viewBox="0 0 25 25"><circle cx="12.5" cy="12.5" r="12" fill="#0c0c0c"/><circle cx="12.5" cy="12.5" r="8.8" fill="none" stroke="#fff" stroke-width="1.5"/><path d="M8.3 8.5 L12.5 17 L16.7 8.5" fill="none" stroke="#fff" stroke-width="2.2"/></svg>
<svg style="left:497px;top:1049px;" width="24" height="22" viewBox="0 0 24 22"><path d="M1 3 Q1 1.5 2.5 1.5 H9 L11 4 H21.5 Q23 4 23 5.5 V18 H1 Z" fill="#f4b92e"/><path d="M1 7.5 H23 V19 Q23 20.5 21.5 20.5 H2.5 Q1 20.5 1 19 Z" fill="#fad366"/><rect x="6.5" y="14.5" width="11" height="6" fill="#4aa3e6"/><rect x="9" y="17" width="6" height="3.5" fill="#fad366"/></svg>
<svg style="left:545px;top:1049px;" width="26" height="23" viewBox="0 0 26 23"><rect x="8" y="1" width="17" height="20" rx="1.5" fill="#1a78d0"/><rect x="12" y="3" width="13" height="7" fill="#4db2f2"/><path d="M8 12 L16.5 17.5 L25 12 V20 Q25 21.5 23.5 21.5 H9.5 Q8 21.5 8 20 Z" fill="#1569bf"/><rect x="1" y="6" width="13" height="13" rx="1.5" fill="#0f5cad"/><circle cx="7.5" cy="12.5" r="3.4" fill="none" stroke="#fff" stroke-width="1.8"/></svg>
<svg style="left:593px;top:1049px;" width="26" height="23" viewBox="0 0 26 23"><rect x="7" y="1" width="18" height="21" rx="1.5" fill="#3a8be0"/><rect x="7" y="1" width="18" height="5.5" fill="#56a8f2"/><rect x="7" y="11.5" width="18" height="5.3" fill="#2467c2"/><rect x="7" y="16.5" width="18" height="5.5" rx="1.5" fill="#174fa3"/><rect x="1" y="6" width="13" height="13" rx="1.5" fill="#1b5bbf"/><path d="M3.8 9.5 L5.6 15.8 L7.5 10.5 L9.4 15.8 L11.2 9.5" fill="none" stroke="#fff" stroke-width="1.5"/></svg>
<svg style="left:643px;top:1049px;" width="26" height="23" viewBox="0 0 26 23"><rect x="7" y="1" width="18" height="21" rx="1.5" fill="#21a366"/><rect x="16" y="1" width="9" height="7" fill="#33c481"/><rect x="7" y="8" width="9" height="7" fill="#107c41"/><rect x="16" y="15" width="9" height="7" fill="#185c37"/><rect x="7" y="15" width="9" height="7" fill="#134f2f"/><rect x="1" y="6" width="13" height="13" rx="1.5" fill="#107c41"/><path d="M4.6 9.5 L10.4 15.8 M10.4 9.5 L4.6 15.8" stroke="#fff" stroke-width="1.7"/></svg>
<svg style="left:693px;top:1048.5px;" width="24" height="24" viewBox="0 0 24 24"><circle cx="12" cy="12" r="11.4" fill="#3b6ff2" stroke="#dfe6ff" stroke-width="1"/><circle cx="11.5" cy="12.5" r="4.6" fill="none" stroke="#fff" stroke-width="2"/><path d="M16.3 8 V17.5" stroke="#fff" stroke-width="2"/></svg>
<div style="left:685px;top:1077px;width:40px;height:2px;background:#8cc5f2;"></div>
<svg style="left:742px;top:1049px;" width="24" height="24" viewBox="0 0 24 24"><circle cx="12" cy="12" r="11.5" fill="#2fb54a"/><path d="M5 13 L10.5 8 L14 11 V17 H5 Z" fill="none" stroke="#dff5e3" stroke-width="1.1"/><rect x="13.5" y="7" width="6" height="5" fill="none" stroke="#dff5e3" stroke-width="1"/><rect x="15" y="14" width="4" height="3.5" fill="#dff5e3"/></svg>
<div style="left:791px;top:1048.5px;width:24px;height:25px;background:#eaf3ec;"></div>
<div class="t" style="left:794px;top:1047px;height:27px;line-height:27px;font-size:25px;font-weight:bold;color:#1f9a4a;">D</div>
<svg style="left:843px;top:1048px;" width="18" height="26" viewBox="0 0 18 26"><rect x=".5" y=".5" width="17" height="25" rx="1.5" fill="#7f9fc6" stroke="#4a6a96"/><rect x="2.5" y="2.5" width="13" height="5" fill="#7fdcf4"/><g fill="#e8eef6"><rect x="2.5" y="10" width="3.5" height="3.5"/><rect x="7.3" y="10" width="3.5" height="3.5"/><rect x="12" y="10" width="3.5" height="3.5"/><rect x="2.5" y="15" width="3.5" height="3.5"/><rect x="7.3" y="15" width="3.5" height="3.5"/><rect x="12" y="15" width="3.5" height="3.5"/><rect x="2.5" y="20" width="3.5" height="3.5"/><rect x="7.3" y="20" width="3.5" height="3.5"/></g><rect x="12" y="20" width="3.5" height="3.5" fill="#f2a63a"/></svg>
<div style="left:832px;top:1077px;width:40px;height:2px;background:#8cc5f2;"></div>
<svg style="left:888px;top:1048px;" width="25" height="25" viewBox="0 0 25 25"><defs><linearGradient id="dbg" x1="0" y1="0" x2="1" y2="0"><stop offset="0" stop-color="#9a9a9a"/><stop offset=".45" stop-color="#f4f4f4"/><stop offset="1" stop-color="#8a8a8a"/></linearGradient></defs><g fill="url(#dbg)" stroke="#6a6a6a" stroke-width=".7"><path d="M1 18 V21 C1 24.5 24 24.5 24 21 V18 Z"/><ellipse cx="12.5" cy="18" rx="11.5" ry="3.4"/><path d="M1 11 V14.5 C1 18 24 18 24 14.5 V11 Z"/><ellipse cx="12.5" cy="11" rx="11.5" ry="3.4"/><path d="M1 4.5 V8 C1 11.5 24 11.5 24 8 V4.5 Z"/><ellipse cx="12.5" cy="4.5" rx="11.5" ry="3.4" fill="#e8e8e8"/></g></svg>
<svg style="left:938px;top:1048px;" width="24" height="26" viewBox="0 0 24 26"><path d="M7 2 L20 4 L22 22 L3 20 Z" fill="#bfe3f4" stroke="#7aa9c4" stroke-width=".8"/><path d="M8 4 L19.5 5.5 L21 21 L9 19.5 Z" fill="#e6f4fb"/><path d="M3 20 L22 22 L21 24.5 L2 22.5 Z" fill="#b0a58c"/><path d="M7 2 L3 20" stroke="#5aa0c8" stroke-width="1.6"/></svg>
<svg style="left:986px;top:1048.5px;" width="24" height="24" viewBox="0 0 24 24"><circle cx="12" cy="12" r="11.5" fill="#fff"/><path d="M12 12 L1.9 6.5 A11.5 11.5 0 0 1 22.1 6.5 Z" fill="#e33b2e"/><path d="M12 12 L22.1 6.5 A11.5 11.5 0 0 1 11.5 23.5 Z" fill="#f7c520"/><path d="M12 12 L11.5 23.5 A11.5 11.5 0 0 1 1.9 6.5 Z" fill="#2ba24c"/><circle cx="12" cy="12" r="5.3" fill="#fff"/><circle cx="12" cy="12" r="4.2" fill="#3f7be8"/></svg>
<div style="left:978px;top:1077px;width:40px;height:2px;background:#8cc5f2;"></div>
<svg style="left:1036px;top:1048px;" width="27" height="27" viewBox="0 0 27 27"><rect x="1" y="1" width="20" height="19" rx="1.5" fill="#2f6fd0"/><path d="M3 4 L11 11 L19 4 M3 17 L9 10 M19 17 L13 10" fill="none" stroke="#d8e8ff" stroke-width="2"/><circle cx="19" cy="19" r="6.5" fill="#3aa845" stroke="#fff" stroke-width="1"/><path d="M15.8 19 L18.2 21.4 L22.4 16.8" fill="none" stroke="#fff" stroke-width="1.6"/></svg>
<div style="left:1027px;top:1077px;width:40px;height:2px;background:#8cc5f2;"></div>
<svg style="left:1496px;top:1049px;" width="24" height="22" viewBox="0 0 24 22"><circle cx="10.5" cy="10" r="9" fill="#f7a325"/><circle cx="9" cy="8" r="6" fill="#fbb83c"/><path d="M9 20.5 C5.5 20.5 5.5 15.5 9 15.5 C9.5 12 15 11.5 16 14.5 C19 13.5 21 16 20 17.5 C23 17.8 23 20.5 20.5 20.5 Z" fill="#e1e6ee"/></svg>
<div class="t" style="left:1527px;top:1048px;height:24px;line-height:24px;font-size:15px;letter-spacing:-0.378px;color:#fff;">22°C</div>
<div class="t" style="left:1565px;top:1048px;height:24px;line-height:24px;font-size:15px;letter-spacing:-0.743px;color:#fff;">Très ensoleillé</div>
<svg style="left:1674px;top:1055px;" width="13" height="9" viewBox="0 0 13 9"><path d="M1 7.5 L6.5 1.5 L12 7.5" fill="none" stroke="#fff" stroke-width="1.4"/></svg>
<svg style="left:1695px;top:1050px;" width="20" height="20" viewBox="0 0 20 20"><path d="M1.5 4.5 L17.5 1.5 V14 L1.5 16.5 Z" fill="none" stroke="#fff" stroke-width="1.2"/><path d="M6 9 a3 3 0 0 1 5 -2 M12 9.5 a3 3 0 0 1 -5 2" stroke="#fff" fill="none" stroke-width="1"/><circle cx="13.5" cy="16" r="3.2" fill="#2f8fe8"/></svg>
<svg style="left:1719px;top:1052px;" width="20" height="18" viewBox="0 0 20 18"><rect x="4" y="2.5" width="14" height="9.5" fill="none" stroke="#fff" stroke-width="1.2"/><path d="M11 12 V16 M7 16.5 H15" stroke="#fff" stroke-width="1.2"/><rect x="1" y="1" width="4" height="3.5" fill="#212d36" stroke="#fff" stroke-width="1"/><path d="M3 4.5 V8" stroke="#fff"/></svg>
<svg style="left:1743px;top:1052px;" width="22" height="17" viewBox="0 0 22 17"><path d="M1.5 5.5 H5 L9.5 1.5 V15.5 L5 11.5 H1.5 Z" fill="none" stroke="#fff" stroke-width="1.2"/><path d="M12 5.5 Q14 8.5 12 11.5 M14.5 3.5 Q18 8.5 14.5 13.5" fill="none" stroke="#fff" stroke-width="1.1"/><path d="M17.5 2 Q21.5 8.5 17.5 15" fill="none" stroke="#8a979e" stroke-width="1.1"/></svg>
<svg style="left:1771px;top:1050px;" width="19" height="21" viewBox="0 0 19 21"><path d="M14 3.4 L8.2 15" stroke="#fff" stroke-width="4.4" stroke-linecap="round"/><path d="M14 3.4 L8.2 15" stroke="#212d36" stroke-width="2.2" stroke-linecap="round"/><path d="M10.3 5.2 L14.4 7.2" stroke="#fff" stroke-width="1"/><path d="M7.2 13.2 C4.5 11.8 1.8 13.8 2.6 16.2 C3.4 18.4 6.2 17.8 7.4 16.4" fill="none" stroke="#fff" stroke-width="1.2"/><path d="M13.6 9.6 C16.2 8.2 18.2 10.2 16.4 11.8" fill="none" stroke="#fff" stroke-width="1.1"/></svg>
<div class="t" style="left:1801px;top:1042px;height:18px;line-height:18px;font-size:12.3px;color:#fff;width:60px;text-align:center;letter-spacing:-.3px;">09:58</div>
<div class="t" style="left:1796px;top:1059.6px;height:18px;line-height:18px;font-size:12.3px;color:#fff;width:70px;text-align:center;letter-spacing:-.3px;">17/08/2023</div>
<div style="left:1914px;top:1040px;width:1px;height:39px;background:#4f5b63;"></div>
<svg style="left:1878px;top:1051px;" width="19" height="17" viewBox="0 0 19 17"><path d="M1 1 H18 V12.5 H7 L3.5 16 V12.5 H1 Z" fill="#fff"/><path d="M4 4.3 H15 M4 6.8 H15 M4 9.3 H12" stroke="#202b34" stroke-width="1"/></svg>
<div style="left:1885.5px;top:1058px;width:17.5px;height:17.5px;border-radius:9px;background:#202b34;border:1.2px solid #c8ced2;"></div>
<div class="t" style="left:1885.5px;top:1059.5px;height:15px;line-height:15px;font-size:10.5px;color:#fff;width:17.5px;text-align:center;font-weight:bold;letter-spacing:-.5px;">41</div>

</div>
</body></html>
